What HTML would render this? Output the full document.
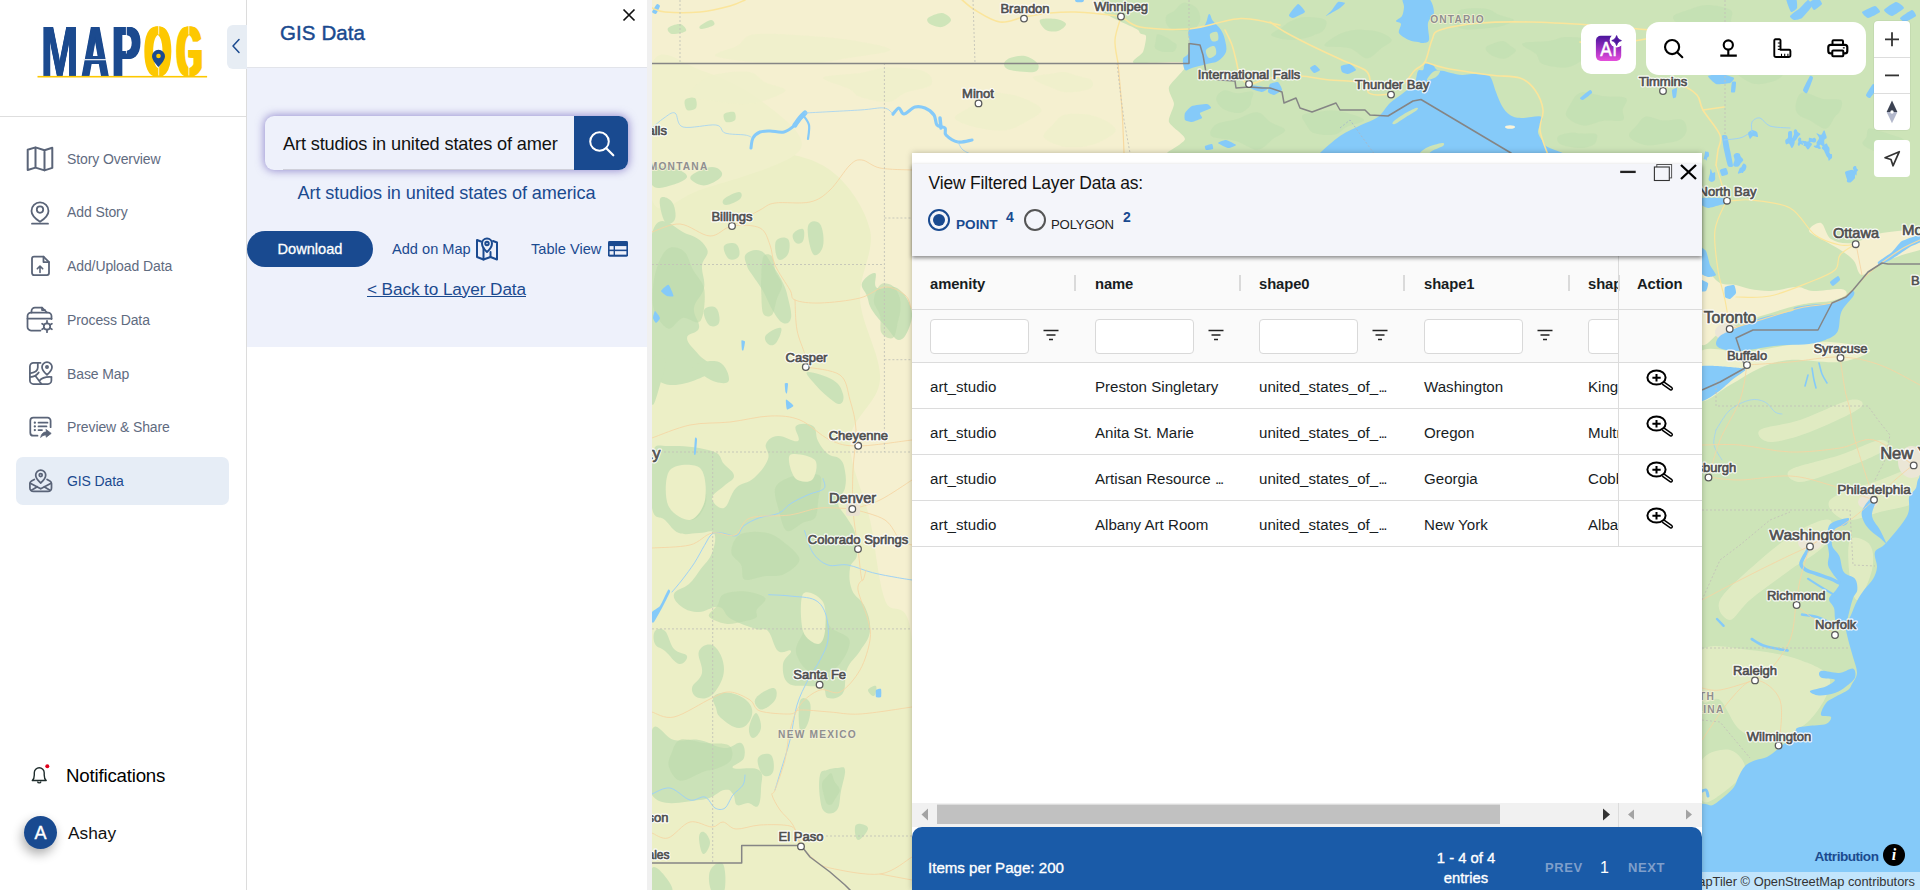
<!DOCTYPE html>
<html lang="en">
<head>
<meta charset="utf-8">
<title>MAPOG - GIS Data</title>
<style>
*{box-sizing:border-box;margin:0;padding:0}
html,body{width:1920px;height:890px;overflow:hidden;background:#fff;font-family:"Liberation Sans",sans-serif;color:#000}
.abs{position:absolute}
#app{position:relative;width:1920px;height:890px;overflow:hidden}

/* ---------- sidebar ---------- */
#side{position:absolute;left:0;top:0;width:247px;height:890px;background:#fff;border-right:1px solid #dcdcdc}
#side .divider{position:absolute;left:0;top:116px;width:246px;height:1px;background:#dedede}
#logo span{position:absolute;top:16.500px;font-size:70.500px;line-height:70.500px;font-weight:bold;transform-origin:0 0;white-space:nowrap}
#collapse{position:absolute;left:227px;top:25px;width:20px;height:44px;background:#e7edf4;border-radius:6px 0 0 6px}
.mi{position:absolute;left:16px;width:213px;height:48px;border-radius:7px}
.mi.active{background:#e6edf6}
.mi svg{position:absolute;left:9px;top:9px;width:30px;height:30px;overflow:visible}
.mi span{position:absolute;left:51px;top:0;line-height:48px;font-size:14px;color:#5f6b7f;white-space:nowrap;letter-spacing:-0.1px}
.mi.active span{color:#1b4a8f}
#notif{position:absolute;left:66px;top:764px;font-size:18.700px;line-height:24px;color:#000;letter-spacing:-0.2px}
#user{position:absolute;left:68px;top:820.500px;font-size:17.300px;line-height:24px;color:#111}
#avatar{position:absolute;left:24px;top:816px;width:33px;height:33px;border-radius:50%;background:#194a90;color:#fff;font-size:18px;line-height:34px;text-align:center;-webkit-text-stroke:.4px #fff;box-shadow:-2px 5px 11px rgba(0,0,0,.32)}

/* ---------- GIS panel ---------- */
#panel{position:absolute;left:247px;top:0;width:400px;height:890px;background:#fff;overflow:hidden}
#panel .head{position:absolute;left:0;top:0;width:402px;height:68px;background:#fff;border-bottom:1px solid #e2e4ea}
#panel .head h1{position:absolute;left:33px;top:19px;font-size:20.5px;line-height:28px;font-weight:500;color:#1b4a8f;letter-spacing:.1px;font-weight:normal;-webkit-text-stroke:.45px #1b4a8f}
#panel .body{position:absolute;left:0;top:68px;width:402px;height:279px;background:#eef1fb}
#search{position:absolute;left:18px;top:48px;width:363px;height:54px;border-radius:9px;background:#eef1fb;box-shadow:0 0 8px 1px rgba(96,80,180,.6);overflow:hidden}
#search .txt{position:absolute;left:18px;top:0;right:54px;height:54px;border-bottom:1px solid #cfd0da;line-height:56px;font-size:18.200px;color:#111;white-space:nowrap;letter-spacing:-.15px}
#search .btn{position:absolute;right:0;top:0;width:54px;height:54px;background:#194a90}
#sub{position:absolute;left:-1.500px;top:112px;width:402px;text-align:center;font-size:18.100px;line-height:26px;color:#1b4a8f;letter-spacing:-.1px}
#dl{position:absolute;left:0;top:163px;width:126px;height:36px;border-radius:18px;background:#194a90;color:#fff;font-size:14.6px;line-height:36px;text-align:center;-webkit-text-stroke:.3px #fff}
.lnk{position:absolute;top:169px;font-size:14.6px;line-height:24px;color:#1b4a8f;white-space:nowrap}
#back{position:absolute;left:-.5px;top:207.500px;width:400px;text-align:center;font-size:17.200px;line-height:26px;color:#1b4a8f;text-decoration:underline;letter-spacing:-.1px}

/* ---------- map ---------- */
#gap{position:absolute;left:647px;top:0;width:5px;height:890px;background:#f0f0f0}
#map{position:absolute;left:652px;top:0;width:1268px;height:890px;background:#f5f0d0;overflow:hidden}
#map svg.base{position:absolute;left:-652px;top:0;width:1920px;height:890px}
.ctl{position:absolute;background:#fff}

/* ---------- table window ---------- */
#win{position:absolute;left:912px;top:153px;width:790px;height:737px;background:#fff;box-shadow:0 0 6px rgba(0,0,0,.25)}
</style>
</head>
<body>
<div id="app">

<!-- MAP -->
<div id="gap"></div>
<div id="map">
<svg class="base" viewBox="0 0 1920 890">
<!--MAPSVG-->
<rect x="652" y="0" width="1268" height="890" fill="#f5f0d0"/>
<path d="M652.0 150.0C670.0 26.7 730.3 146.7 760.0 150.0C789.7 153.3 811.7 156.7 830.0 170.0C848.3 183.3 865.0 208.3 870.0 230.0C875.0 251.7 858.3 275.0 860.0 300.0C861.7 325.0 881.7 356.7 880.0 380.0C878.3 403.3 851.7 416.7 850.0 440.0C848.3 463.3 864.2 493.3 870.0 520.0C875.8 546.7 878.0 580.0 885.0 600.0C892.0 620.0 907.5 591.7 912.0 640.0C916.5 688.3 955.3 848.3 912.0 890.0C868.7 931.7 695.3 1013.3 652.0 890.0C608.7 766.7 634.0 273.3 652.0 150.0Z" fill="#ecefc6"/>
<path d="M652.0 64.0C660.0 42.3 682.0 64.0 700.0 70.0C718.0 76.0 743.3 86.7 760.0 100.0C776.7 113.3 810.0 135.0 800.0 150.0C790.0 165.0 724.7 181.7 700.0 190.0C675.3 198.3 660.0 221.0 652.0 200.0C644.0 179.0 644.0 85.7 652.0 64.0Z" fill="#f0f0cb"/>
<path d="M1138.0 -5.0C1046.3 -0.8 1138.1 26.2 1139.0 31.0C1139.9 35.8 1145.5 33.5 1146.0 36.0C1146.5 38.5 1144.4 48.9 1143.0 52.0C1141.6 55.1 1129.0 61.7 1134.0 63.0C1139.0 64.3 1181.9 60.2 1186.0 63.0C1190.1 65.8 1170.4 82.2 1169.0 87.0C1167.6 91.8 1174.0 99.9 1174.0 104.0C1174.0 108.1 1167.7 117.9 1169.0 122.0C1170.3 126.1 1185.2 135.4 1185.0 139.0C1184.8 142.6 1169.1 150.6 1167.0 153.0C1164.9 155.4 1078.6 159.2 1167.0 160.0C1255.4 160.8 1836.6 179.2 1925.0 160.0C2013.4 140.8 2016.8 14.2 1925.0 -5.0C1833.2 -24.2 1229.7 -9.2 1138.0 -5.0Z" fill="#cde4b8"/>
<rect x="1700" y="150" width="220" height="740" fill="#cde4b8"/>
<path d="M1285.1 130.0C1285.5 132.8 1277.7 135.5 1273.2 138.7C1268.6 142.0 1263.9 149.2 1257.7 149.6C1251.5 150.0 1243.7 143.1 1236.0 140.9C1228.3 138.7 1214.8 139.1 1211.5 136.3C1208.1 133.6 1211.8 127.3 1215.9 124.4C1220.1 121.6 1229.3 121.3 1236.2 119.2C1243.0 117.2 1251.2 111.7 1257.0 112.2C1262.7 112.7 1266.0 119.2 1270.7 122.2C1275.4 125.1 1284.7 127.2 1285.1 130.0Z" fill="#bfdeb0" opacity=".55"/>
<path d="M1323.8 30.0C1321.9 32.6 1316.8 34.0 1313.4 35.4C1309.9 36.8 1307.3 37.7 1303.1 38.4C1298.9 39.2 1293.5 40.4 1288.2 39.8C1282.8 39.3 1272.0 37.2 1271.1 35.0C1270.2 32.9 1279.6 29.2 1282.7 27.0C1285.8 24.7 1286.2 23.3 1289.9 21.6C1293.6 20.0 1298.9 17.4 1304.7 17.1C1310.6 16.8 1322.0 17.7 1325.2 19.9C1328.3 22.0 1325.8 27.4 1323.8 30.0Z" fill="#bfdeb0" opacity=".55"/>
<path d="M1391.6 40.0C1391.9 42.7 1385.4 45.3 1381.3 48.3C1377.2 51.4 1372.2 58.4 1366.9 58.4C1361.7 58.4 1356.8 50.3 1349.8 48.3C1342.7 46.2 1327.0 48.0 1324.7 46.0C1322.4 43.9 1332.0 38.4 1336.0 35.9C1340.0 33.4 1344.1 31.9 1348.7 30.9C1353.4 29.9 1358.6 29.7 1363.8 29.9C1369.0 30.1 1375.3 30.5 1379.9 32.2C1384.5 33.9 1391.4 37.3 1391.6 40.0Z" fill="#bfdeb0" opacity=".55"/>
<path d="M1364.2 120.0C1364.1 122.4 1351.5 124.6 1346.7 127.0C1341.8 129.4 1340.5 133.5 1335.1 134.6C1329.8 135.6 1319.5 135.0 1314.6 133.3C1309.8 131.6 1308.0 127.4 1306.0 124.4C1304.1 121.3 1300.4 117.2 1302.8 115.1C1305.2 112.9 1315.2 112.4 1320.3 111.6C1325.4 110.8 1328.9 110.3 1333.4 110.5C1337.8 110.7 1341.9 111.3 1347.0 112.9C1352.2 114.4 1364.3 117.6 1364.2 120.0Z" fill="#bfdeb0" opacity=".55"/>
<path d="M1513.8 20.0C1514.3 21.9 1506.7 24.7 1501.8 26.1C1496.9 27.5 1490.8 28.1 1484.5 28.6C1478.2 29.1 1469.4 30.1 1464.1 29.2C1458.8 28.3 1454.1 25.3 1452.7 23.3C1451.3 21.3 1454.2 19.4 1455.8 17.1C1457.3 14.8 1456.9 10.9 1461.9 9.6C1466.9 8.2 1479.8 7.9 1485.9 8.8C1492.1 9.6 1494.2 12.9 1498.9 14.7C1503.5 16.6 1513.3 18.1 1513.8 20.0Z" fill="#bfdeb0" opacity=".55"/>
<path d="M1591.6 50.0C1590.9 53.3 1587.6 56.3 1583.4 59.2C1579.2 62.1 1573.4 66.6 1566.6 67.4C1559.8 68.2 1547.7 66.3 1542.6 64.1C1537.5 61.8 1539.4 57.5 1536.0 54.1C1532.6 50.7 1520.2 45.8 1522.3 43.6C1524.5 41.4 1541.9 42.2 1549.0 41.1C1556.1 40.0 1558.6 37.3 1564.9 37.0C1571.3 36.7 1582.7 37.2 1587.1 39.4C1591.6 41.5 1592.2 46.7 1591.6 50.0Z" fill="#bfdeb0" opacity=".55"/>
<path d="M1622.7 110.0C1622.1 113.6 1626.0 118.4 1622.8 120.2C1619.6 122.0 1610.1 119.8 1603.5 120.7C1596.9 121.6 1589.4 126.2 1583.2 125.5C1577.1 124.8 1568.7 120.0 1566.6 116.5C1564.4 112.9 1568.0 108.2 1570.4 104.2C1572.8 100.3 1575.4 93.8 1581.1 92.5C1586.8 91.2 1597.0 95.3 1604.5 96.3C1612.0 97.3 1623.1 96.0 1626.1 98.3C1629.1 100.6 1623.2 106.4 1622.7 110.0Z" fill="#bfdeb0" opacity=".55"/>
<path d="M1686.7 130.0C1686.4 133.3 1684.0 137.3 1680.2 139.5C1676.5 141.7 1670.2 142.4 1664.2 143.4C1658.3 144.3 1650.4 146.2 1644.5 145.0C1638.7 143.8 1630.5 139.6 1629.2 136.3C1627.9 133.0 1634.1 128.6 1636.9 125.3C1639.7 122.0 1641.7 117.3 1646.1 116.5C1650.4 115.7 1657.0 119.9 1663.0 120.5C1669.0 121.0 1677.9 118.1 1681.9 119.7C1685.8 121.3 1686.9 126.7 1686.7 130.0Z" fill="#bfdeb0" opacity=".55"/>
<path d="M1783.1 60.0C1785.3 64.5 1785.4 73.3 1780.9 77.3C1776.5 81.3 1763.7 84.6 1756.4 84.1C1749.1 83.7 1742.6 77.7 1737.3 74.7C1731.9 71.7 1727.2 70.0 1724.1 66.3C1720.9 62.6 1715.8 55.3 1718.5 52.4C1721.1 49.4 1733.9 50.4 1740.0 48.5C1746.1 46.5 1750.5 40.6 1755.1 40.8C1759.7 41.1 1763.0 46.9 1767.6 50.1C1772.3 53.3 1780.9 55.5 1783.1 60.0Z" fill="#bfdeb0" opacity=".55"/>
<path d="M1840.5 110.0C1839.5 112.8 1837.3 114.0 1834.8 117.1C1832.4 120.2 1830.0 128.2 1825.8 128.7C1821.6 129.2 1814.2 122.6 1809.6 120.3C1805.1 117.9 1800.7 117.1 1798.3 114.5C1796.0 112.0 1795.0 108.6 1795.7 104.9C1796.4 101.3 1797.7 93.6 1802.4 92.5C1807.0 91.5 1817.0 97.6 1823.4 98.9C1829.8 100.1 1837.8 98.2 1840.7 100.1C1843.5 101.9 1841.5 107.2 1840.5 110.0Z" fill="#bfdeb0" opacity=".55"/>
<path d="M1731.0 20.0C1730.8 23.3 1733.3 27.4 1729.1 29.8C1725.0 32.2 1714.4 33.9 1706.4 34.5C1698.4 35.0 1686.2 34.9 1681.2 33.0C1676.1 31.2 1677.5 26.3 1676.2 23.5C1674.9 20.7 1671.8 18.3 1673.5 16.1C1675.2 14.0 1681.0 12.5 1686.5 10.6C1692.0 8.8 1699.3 5.1 1706.6 5.0C1713.9 4.9 1726.3 7.3 1730.3 9.8C1734.4 12.3 1731.2 16.7 1731.0 20.0Z" fill="#bfdeb0" opacity=".55"/>
<path d="M1596.6 140.0C1596.1 141.8 1595.3 143.6 1593.0 145.0C1590.8 146.3 1586.8 147.7 1583.1 148.0C1579.4 148.3 1575.0 147.8 1571.1 147.0C1567.1 146.3 1561.7 145.2 1559.5 143.4C1557.4 141.6 1556.2 138.1 1558.0 136.4C1559.9 134.6 1566.8 133.2 1570.8 132.8C1574.9 132.3 1578.3 133.4 1582.5 133.6C1586.7 133.8 1593.5 132.9 1595.9 133.9C1598.3 135.0 1597.1 138.2 1596.6 140.0Z" fill="#bfdeb0" opacity=".55"/>
<path d="M1251.4 100.0C1250.8 102.5 1251.5 104.6 1249.4 106.7C1247.4 108.9 1243.2 112.5 1239.1 113.0C1235.0 113.5 1228.3 111.4 1224.8 109.8C1221.3 108.2 1219.3 105.7 1217.9 103.5C1216.6 101.2 1215.5 98.5 1216.7 96.3C1217.9 94.1 1221.5 90.8 1224.9 90.3C1228.3 89.8 1232.5 93.0 1237.1 93.2C1241.8 93.5 1250.3 90.6 1252.6 91.8C1255.0 92.9 1251.9 97.5 1251.4 100.0Z" fill="#bfdeb0" opacity=".55"/>
<path d="M1903.9 140.0C1905.4 142.5 1902.6 147.4 1899.3 149.7C1896.1 152.1 1889.0 154.3 1884.2 154.3C1879.4 154.3 1874.4 151.4 1870.8 149.6C1867.1 147.9 1863.3 145.9 1862.5 143.8C1861.8 141.7 1865.3 139.6 1866.4 137.0C1867.5 134.5 1866.4 129.5 1869.1 128.6C1871.7 127.8 1878.8 130.8 1882.4 131.8C1886.0 132.8 1887.1 133.3 1890.7 134.6C1894.3 136.0 1902.5 137.5 1903.9 140.0Z" fill="#bfdeb0" opacity=".55"/>
<path d="M1515.9 50.0C1516.2 51.5 1513.8 53.5 1511.7 54.9C1509.6 56.4 1506.2 58.6 1503.1 58.7C1500.0 58.9 1495.7 57.0 1493.1 55.9C1490.6 54.9 1489.0 53.6 1487.8 52.2C1486.6 50.8 1485.0 48.8 1485.8 47.4C1486.6 46.0 1489.9 44.8 1492.8 43.8C1495.7 42.7 1500.2 40.8 1503.1 41.1C1506.0 41.4 1508.1 44.2 1510.2 45.7C1512.4 47.2 1515.7 48.5 1515.9 50.0Z" fill="#bfdeb0" opacity=".55"/>
<path d="M1200.2 20.0C1199.7 23.6 1196.3 28.0 1193.2 29.7C1190.2 31.5 1185.4 30.3 1182.1 30.4C1178.8 30.4 1176.0 31.0 1173.4 30.0C1170.8 29.0 1167.7 26.7 1166.6 24.3C1165.4 21.9 1165.1 17.9 1166.4 15.7C1167.7 13.5 1171.3 13.2 1174.1 11.1C1177.0 8.9 1179.7 3.4 1183.5 2.8C1187.2 2.3 1193.7 5.0 1196.5 7.9C1199.3 10.8 1200.7 16.4 1200.2 20.0Z" fill="#bfdeb0" opacity=".55"/>
<path d="M1176.7 45.0C1177.2 46.8 1175.8 50.2 1174.1 51.4C1172.4 52.5 1168.7 52.0 1166.5 52.0C1164.2 52.0 1162.6 51.9 1160.7 51.2C1158.8 50.6 1155.8 49.6 1155.0 48.0C1154.1 46.5 1155.1 44.4 1155.6 42.1C1156.0 39.9 1155.8 35.1 1157.6 34.3C1159.5 33.6 1164.3 36.4 1166.6 37.5C1168.8 38.5 1169.4 39.5 1171.1 40.7C1172.8 42.0 1176.2 43.2 1176.7 45.0Z" fill="#bfdeb0" opacity=".55"/>
<path d="M1809.0 231.0C1808.3 228.0 1817.3 221.7 1821.0 223.0C1824.7 224.3 1825.8 235.7 1831.0 239.0C1836.2 242.3 1843.5 244.0 1852.0 243.0C1860.5 242.0 1869.8 235.0 1882.0 233.0C1894.2 231.0 1917.8 228.7 1925.0 231.0C1932.2 233.3 1928.8 243.0 1925.0 247.0C1921.2 251.0 1909.2 252.3 1902.0 255.0C1894.8 257.7 1888.7 259.7 1882.0 263.0C1875.3 266.3 1866.7 275.3 1862.0 275.0C1857.3 274.7 1857.3 265.0 1854.0 261.0C1850.7 257.0 1846.8 254.3 1842.0 251.0C1837.2 247.7 1830.5 244.3 1825.0 241.0C1819.5 237.7 1809.7 234.0 1809.0 231.0Z" fill="#f5f0d0"/>
<path d="M1700.0 271.0C1703.3 261.2 1714.0 280.7 1720.0 283.0C1726.0 285.3 1731.0 284.0 1736.0 285.0C1741.0 286.0 1744.2 288.0 1750.0 289.0C1755.8 290.0 1763.2 291.3 1771.0 291.0C1778.8 290.7 1790.0 287.0 1797.0 287.0C1804.0 287.0 1805.7 290.7 1813.0 291.0C1820.3 291.3 1835.5 288.3 1841.0 289.0C1846.5 289.7 1847.7 293.0 1846.0 295.0C1844.3 297.0 1836.8 299.7 1831.0 301.0C1825.2 302.3 1817.7 302.0 1811.0 303.0C1804.3 304.0 1799.3 304.8 1791.0 307.0C1782.7 309.2 1771.2 312.8 1761.0 316.0C1750.8 319.2 1736.8 323.3 1730.0 326.0C1723.2 328.7 1725.0 329.3 1720.0 332.0C1715.0 334.7 1703.3 352.2 1700.0 342.0C1696.7 331.8 1696.7 280.8 1700.0 271.0Z" fill="#f5f0d0"/>
<path d="M1700.0 352.0C1707.5 344.0 1730.0 353.2 1745.0 352.0C1760.0 350.8 1775.8 346.7 1790.0 345.0C1804.2 343.3 1816.7 341.2 1830.0 342.0C1843.3 342.8 1868.3 346.7 1870.0 350.0C1871.7 353.3 1853.3 360.3 1840.0 362.0C1826.7 363.7 1803.3 359.0 1790.0 360.0C1776.7 361.0 1770.0 363.8 1760.0 368.0C1750.0 372.2 1740.0 379.7 1730.0 385.0C1720.0 390.3 1705.0 405.5 1700.0 400.0C1695.0 394.5 1692.5 360.0 1700.0 352.0Z" fill="#eef0cc"/>
<path d="M1760.0 430.0C1765.0 426.3 1785.0 425.0 1800.0 420.0C1815.0 415.0 1840.0 402.0 1850.0 400.0C1860.0 398.0 1866.7 402.7 1860.0 408.0C1853.3 413.3 1825.0 426.3 1810.0 432.0C1795.0 437.7 1778.3 442.3 1770.0 442.0C1761.7 441.7 1755.0 433.7 1760.0 430.0Z" fill="#e6edc6" opacity=".75"/>
<path d="M1790.0 470.0C1796.7 465.5 1825.0 460.0 1840.0 455.0C1855.0 450.0 1872.5 440.8 1880.0 440.0C1887.5 439.2 1891.7 445.0 1885.0 450.0C1878.3 455.0 1854.2 464.7 1840.0 470.0C1825.8 475.3 1808.3 482.0 1800.0 482.0C1791.7 482.0 1783.3 474.5 1790.0 470.0Z" fill="#e6edc6" opacity=".75"/>
<path d="M1830.0 500.0C1835.8 493.3 1865.8 485.0 1880.0 480.0C1894.2 475.0 1908.7 466.7 1915.0 470.0C1921.3 473.3 1923.8 493.0 1918.0 500.0C1912.2 507.0 1892.2 508.7 1880.0 512.0C1867.8 515.3 1853.3 522.0 1845.0 520.0C1836.7 518.0 1824.2 506.7 1830.0 500.0Z" fill="#e6edc6" opacity=".75"/>
<path d="M1720.0 600.0C1725.0 590.0 1746.7 571.7 1760.0 560.0C1773.3 548.3 1788.3 536.7 1800.0 530.0C1811.7 523.3 1825.8 517.5 1830.0 520.0C1834.2 522.5 1831.7 536.7 1825.0 545.0C1818.3 553.3 1802.5 560.8 1790.0 570.0C1777.5 579.2 1760.0 591.7 1750.0 600.0C1740.0 608.3 1735.0 620.0 1730.0 620.0C1725.0 620.0 1715.0 610.0 1720.0 600.0Z" fill="#e6edc6" opacity=".75"/>
<path d="M1702.0 650.0C1710.0 641.7 1733.7 648.3 1750.0 650.0C1766.3 651.7 1786.7 655.0 1800.0 660.0C1813.3 665.0 1828.3 670.0 1830.0 680.0C1831.7 690.0 1820.0 710.0 1810.0 720.0C1800.0 730.0 1781.7 738.3 1770.0 740.0C1758.3 741.7 1748.3 736.7 1740.0 730.0C1731.7 723.3 1726.3 705.0 1720.0 700.0C1713.7 695.0 1705.0 708.3 1702.0 700.0C1699.0 691.7 1694.0 658.3 1702.0 650.0Z" fill="#e6edc6" opacity=".75"/>
<path d="M1850.0 540.0C1853.3 534.2 1866.3 540.0 1870.0 545.0C1873.7 550.0 1874.0 560.8 1872.0 570.0C1870.0 579.2 1861.7 598.3 1858.0 600.0C1854.3 601.7 1851.3 590.0 1850.0 580.0C1848.7 570.0 1846.7 545.8 1850.0 540.0Z" fill="#e6edc6" opacity=".75"/>
<path d="M1702.0 760.0C1706.7 751.7 1722.8 748.3 1730.0 750.0C1737.2 751.7 1746.7 762.5 1745.0 770.0C1743.3 777.5 1727.2 790.0 1720.0 795.0C1712.8 800.0 1705.0 805.8 1702.0 800.0C1699.0 794.2 1697.3 768.3 1702.0 760.0Z" fill="#e6edc6" opacity=".75"/>
<ellipse cx="1912" cy="462" rx="14" ry="16" fill="#ebe6d6"/>
<ellipse cx="1868" cy="502" rx="10" ry="7" fill="#ebe6d6"/>
<ellipse cx="1810" cy="542" rx="12" ry="9" fill="#ebe6d6"/>
<ellipse cx="1727" cy="332" rx="12" ry="9" fill="#ebe6d6"/>
<path d="M652.0 234.0C659.0 206.4 676.0 231.0 687.0 234.0C698.0 237.0 704.0 242.6 707.0 249.0C710.0 255.4 702.6 258.2 702.0 266.0C701.4 273.8 705.6 279.6 704.0 288.0C702.4 296.4 695.0 300.0 694.0 308.0C693.0 316.0 700.4 322.0 699.0 328.0C697.6 334.0 687.0 332.6 687.0 338.0C687.0 343.4 693.6 348.2 699.0 355.0C704.4 361.8 723.4 368.6 714.0 372.0C704.6 375.4 664.4 399.6 652.0 372.0C639.6 344.4 645.0 261.6 652.0 234.0Z" fill="#cbe2b8"/>
<path d="M652.0 170.0C655.6 166.4 663.0 165.6 670.0 167.0C677.0 168.4 688.0 173.0 687.0 177.0C686.0 181.0 672.0 185.4 665.0 187.0C658.0 188.6 654.6 188.4 652.0 185.0C649.4 181.6 648.4 173.6 652.0 170.0Z" fill="#cbe2b8"/>
<path d="M692.0 175.0C695.6 172.0 706.0 167.0 712.0 167.0C718.0 167.0 723.0 171.4 722.0 175.0C721.0 178.6 712.6 183.6 707.0 185.0C701.4 186.4 697.0 184.0 694.0 182.0C691.0 180.0 688.4 178.0 692.0 175.0Z" fill="#cbe2b8"/>
<path d="M660.0 199.0C661.4 195.0 669.0 198.0 672.0 202.0C675.0 206.0 676.4 215.0 675.0 219.0C673.6 223.0 668.0 226.0 665.0 222.0C662.0 218.0 658.6 203.0 660.0 199.0Z" fill="#cbe2b8"/>
<path d="M746.0 254.0C748.8 251.0 755.6 248.6 761.0 251.0C766.4 253.4 768.6 259.6 773.0 266.0C777.4 272.4 780.0 276.6 783.0 283.0C786.0 289.4 786.4 291.0 788.0 298.0C789.6 305.0 792.0 313.0 791.0 318.0C790.0 323.0 786.6 324.4 783.0 323.0C779.4 321.6 777.0 317.4 773.0 311.0C769.0 304.6 767.0 298.0 763.0 291.0C759.0 284.0 756.2 281.0 753.0 276.0C749.8 271.0 748.4 270.4 747.0 266.0C745.6 261.6 743.2 257.0 746.0 254.0Z" fill="#cbe2b8"/>
<path d="M724.0 246.0C725.4 243.0 733.0 242.0 736.0 244.0C739.0 246.0 740.4 253.0 739.0 256.0C737.6 259.0 732.0 261.0 729.0 259.0C726.0 257.0 722.6 249.0 724.0 246.0Z" fill="#cbe2b8"/>
<path d="M776.0 241.0C778.0 237.0 785.6 236.4 788.0 239.0C790.4 241.6 790.0 250.0 788.0 254.0C786.0 258.0 780.4 261.6 778.0 259.0C775.6 256.4 774.0 245.0 776.0 241.0Z" fill="#cbe2b8"/>
<path d="M793.0 234.0C794.4 231.2 801.0 227.6 803.0 229.0C805.0 230.4 804.4 238.2 803.0 241.0C801.6 243.8 798.0 244.4 796.0 243.0C794.0 241.6 791.6 236.8 793.0 234.0Z" fill="#cbe2b8"/>
<path d="M808.0 226.0C809.4 220.0 817.0 220.0 820.0 224.0C823.0 228.0 824.4 240.0 823.0 246.0C821.6 252.0 816.0 258.0 813.0 254.0C810.0 250.0 806.6 232.0 808.0 226.0Z" fill="#cbe2b8"/>
<path d="M724.0 199.0C726.6 196.4 735.8 192.0 739.0 192.0C742.2 192.0 742.6 196.4 740.0 199.0C737.4 201.6 729.2 205.0 726.0 205.0C722.8 205.0 721.4 201.6 724.0 199.0Z" fill="#cbe2b8"/>
<path d="M862.0 283.0C863.6 278.4 872.0 272.0 875.0 273.0C878.0 274.0 872.6 285.0 877.0 288.0C881.4 291.0 890.2 284.0 897.0 288.0C903.8 292.0 908.6 300.0 911.0 308.0C913.4 316.0 911.4 321.6 909.0 328.0C906.6 334.4 903.4 340.0 899.0 340.0C894.6 340.0 892.4 334.0 887.0 328.0C881.6 322.0 876.0 316.4 872.0 310.0C868.0 303.6 869.0 301.4 867.0 296.0C865.0 290.6 860.4 287.6 862.0 283.0Z" fill="#cbe2b8"/>
<path d="M704.0 310.0C705.4 306.6 713.0 305.4 716.0 308.0C719.0 310.6 720.4 319.6 719.0 323.0C717.6 326.4 712.0 327.6 709.0 325.0C706.0 322.4 702.6 313.4 704.0 310.0Z" fill="#cbe2b8"/>
<path d="M766.0 335.0C768.6 331.8 779.0 326.4 781.0 328.0C783.0 329.6 778.6 339.8 776.0 343.0C773.4 346.2 770.0 345.6 768.0 344.0C766.0 342.4 763.4 338.2 766.0 335.0Z" fill="#cbe2b8"/>
<path d="M652.0 360.0C654.6 351.2 663.4 355.0 665.0 360.0C666.6 365.0 662.6 376.2 660.0 385.0C657.4 393.8 653.6 409.0 652.0 404.0C650.4 399.0 649.4 368.8 652.0 360.0Z" fill="#cbe2b8"/>
<path d="M694.0 365.0C698.0 363.0 712.0 359.0 719.0 362.0C726.0 365.0 729.6 376.0 729.0 380.0C728.4 384.0 722.0 383.6 716.0 382.0C710.0 380.4 703.4 375.4 699.0 372.0C694.6 368.6 690.0 367.0 694.0 365.0Z" fill="#cbe2b8"/>
<path d="M808.0 372.0C812.0 371.6 826.0 375.6 833.0 380.0C840.0 384.4 841.6 389.2 843.0 394.0C844.4 398.8 843.0 403.4 840.0 404.0C837.0 404.6 833.4 401.4 828.0 397.0C822.6 392.6 817.0 387.0 813.0 382.0C809.0 377.0 804.0 372.4 808.0 372.0Z" fill="#cbe2b8"/>
<path d="M652.0 454.0C655.6 441.6 658.0 446.6 670.0 446.0C682.0 445.4 701.2 447.4 712.0 451.0C722.8 454.6 719.6 459.0 724.0 464.0C728.4 469.0 734.0 471.6 734.0 476.0C734.0 480.4 728.4 481.6 724.0 486.0C719.6 490.4 712.0 493.6 712.0 498.0C712.0 502.4 719.2 510.0 724.0 508.0C728.8 506.0 730.0 494.0 736.0 488.0C742.0 482.0 747.6 483.8 754.0 478.0C760.4 472.2 765.6 465.8 768.0 459.0C770.4 452.2 764.0 448.6 766.0 444.0C768.0 439.4 771.6 436.6 778.0 436.0C784.4 435.4 794.4 443.0 798.0 441.0C801.6 439.0 793.0 429.0 796.0 426.0C799.0 423.0 808.6 423.0 813.0 426.0C817.4 429.0 815.0 435.4 818.0 441.0C821.0 446.6 823.6 450.4 828.0 454.0C832.4 457.6 836.6 455.6 840.0 459.0C843.4 462.4 844.0 465.2 845.0 471.0C846.0 476.8 846.4 481.6 845.0 488.0C843.6 494.4 837.6 497.0 838.0 503.0C838.4 509.0 843.6 512.0 847.0 518.0C850.4 524.0 853.0 525.6 855.0 533.0C857.0 540.4 858.0 548.0 857.0 555.0C856.0 562.0 851.0 561.0 850.0 568.0C849.0 575.0 849.0 582.2 852.0 590.0C855.0 597.8 861.4 598.8 865.0 607.0C868.6 615.2 871.0 622.2 870.0 631.0C869.0 639.8 864.6 643.4 860.0 651.0C855.4 658.6 850.4 660.6 847.0 669.0C843.6 677.4 846.8 687.2 843.0 693.0C839.2 698.8 832.0 699.0 828.0 698.0C824.0 697.0 827.0 690.4 823.0 688.0C819.0 685.6 815.0 687.0 808.0 686.0C801.0 685.0 793.0 687.4 788.0 683.0C783.0 678.6 782.4 670.4 783.0 664.0C783.6 657.6 792.0 653.6 791.0 651.0C790.0 648.4 782.6 655.0 778.0 651.0C773.4 647.0 772.4 635.4 768.0 631.0C763.6 626.6 763.4 631.4 756.0 629.0C748.6 626.6 738.4 623.4 731.0 619.0C723.6 614.6 725.4 608.4 719.0 607.0C712.6 605.6 706.4 612.0 699.0 612.0C691.6 612.0 687.0 610.6 682.0 607.0C677.0 603.4 672.6 598.6 674.0 594.0C675.4 589.4 683.8 588.8 689.0 584.0C694.2 579.2 695.4 576.2 700.0 570.0C704.6 563.8 709.2 560.4 712.0 553.0C714.8 545.6 716.6 537.0 714.0 533.0C711.4 529.0 706.0 533.0 699.0 533.0C692.0 533.0 685.8 535.6 679.0 533.0C672.2 530.4 670.4 525.0 665.0 520.0C659.6 515.0 654.6 521.2 652.0 508.0C649.4 494.8 648.4 466.4 652.0 454.0Z" fill="#cbe2b8"/>
<path d="M699.0 651.0C701.4 645.6 709.0 642.4 714.0 646.0C719.0 649.6 724.0 659.6 724.0 669.0C724.0 678.4 719.0 687.2 714.0 693.0C709.0 698.8 703.4 699.0 699.0 698.0C694.6 697.0 691.4 693.0 692.0 688.0C692.6 683.0 700.6 680.4 702.0 673.0C703.4 665.6 696.6 656.4 699.0 651.0Z" fill="#cbe2b8"/>
<path d="M655.0 631.0C657.0 628.4 661.2 627.4 665.0 631.0C668.8 634.6 669.6 644.0 674.0 649.0C678.4 654.0 686.0 653.0 687.0 656.0C688.0 659.0 683.4 665.0 679.0 664.0C674.6 663.0 669.8 655.0 665.0 651.0C660.2 647.0 657.0 648.0 655.0 644.0C653.0 640.0 653.0 633.6 655.0 631.0Z" fill="#cbe2b8"/>
<path d="M714.0 696.0C717.0 693.0 724.0 691.6 731.0 693.0C738.0 694.4 745.0 698.0 749.0 703.0C753.0 708.0 753.0 713.0 751.0 718.0C749.0 723.0 745.0 728.0 739.0 728.0C733.0 728.0 725.6 722.0 721.0 718.0C716.4 714.0 717.4 712.4 716.0 708.0C714.6 703.6 711.0 699.0 714.0 696.0Z" fill="#cbe2b8"/>
<path d="M756.0 698.0C759.0 694.0 769.0 688.0 773.0 688.0C777.0 688.0 777.4 694.0 776.0 698.0C774.6 702.0 769.6 706.0 766.0 708.0C762.4 710.0 760.0 710.0 758.0 708.0C756.0 706.0 753.0 702.0 756.0 698.0Z" fill="#cbe2b8"/>
<path d="M800.0 701.0C802.0 695.6 808.4 698.6 810.0 703.0C811.6 707.4 810.0 717.6 808.0 723.0C806.0 728.4 801.6 734.4 800.0 730.0C798.4 725.6 798.0 706.4 800.0 701.0Z" fill="#cbe2b8"/>
<path d="M749.0 728.0C749.6 723.0 753.6 713.0 756.0 713.0C758.4 713.0 761.6 723.0 761.0 728.0C760.4 733.0 755.4 738.0 753.0 738.0C750.6 738.0 748.4 733.0 749.0 728.0Z" fill="#cbe2b8"/>
<path d="M652.0 730.0C656.4 719.0 664.6 738.0 674.0 740.0C683.4 742.0 689.0 738.4 699.0 740.0C709.0 741.6 715.6 747.4 724.0 748.0C732.4 748.6 737.0 741.0 741.0 743.0C745.0 745.0 745.6 753.0 744.0 758.0C742.4 763.0 730.0 765.6 733.0 768.0C736.0 770.4 753.4 766.0 759.0 770.0C764.6 774.0 761.2 780.8 761.0 788.0C760.8 795.2 760.6 803.0 758.0 806.0C755.4 809.0 752.2 803.2 748.0 803.0C743.8 802.8 740.0 806.8 737.0 805.0C734.0 803.2 735.6 797.0 733.0 794.0C730.4 791.0 730.6 788.8 724.0 790.0C717.4 791.2 714.4 799.0 700.0 800.0C685.6 801.0 661.6 809.0 652.0 795.0C642.4 781.0 647.6 741.0 652.0 730.0Z" fill="#cbe2b8"/>
<path d="M758.0 758.0C759.6 754.0 768.0 752.2 771.0 755.0C774.0 757.8 774.6 768.0 773.0 772.0C771.4 776.0 766.0 777.8 763.0 775.0C760.0 772.2 756.4 762.0 758.0 758.0Z" fill="#cbe2b8"/>
<path d="M820.0 775.0C821.4 769.4 823.4 771.4 827.0 770.0C830.6 768.6 834.4 768.0 838.0 768.0C841.6 768.0 844.4 765.4 845.0 770.0C845.6 774.6 842.6 783.0 841.0 791.0C839.4 799.0 840.2 805.8 837.0 810.0C833.8 814.2 828.4 814.4 825.0 812.0C821.6 809.6 821.0 805.4 820.0 798.0C819.0 790.6 818.6 780.6 820.0 775.0Z" fill="#cbe2b8"/>
<path d="M699.0 837.0C699.2 832.6 701.8 830.8 704.0 832.0C706.2 833.2 710.2 838.6 710.0 843.0C709.8 847.4 705.2 855.2 703.0 854.0C700.8 852.8 698.8 841.4 699.0 837.0Z" fill="#cbe2b8"/>
<path d="M855.0 827.0C855.6 823.8 858.4 823.6 861.0 824.0C863.6 824.4 868.6 825.8 868.0 829.0C867.4 832.2 860.6 840.4 858.0 840.0C855.4 839.6 854.4 830.2 855.0 827.0Z" fill="#cbe2b8"/>
<path d="M710.0 871.0C712.2 865.4 720.2 859.8 723.0 864.0C725.8 868.2 726.2 886.4 724.0 892.0C721.8 897.6 714.8 896.2 712.0 892.0C709.2 887.8 707.8 876.6 710.0 871.0Z" fill="#cbe2b8"/>
<path d="M652.0 868.0C654.4 864.6 660.0 870.2 664.0 875.0C668.0 879.8 674.4 888.6 672.0 892.0C669.6 895.4 656.0 896.8 652.0 892.0C648.0 887.2 649.6 871.4 652.0 868.0Z" fill="#cbe2b8"/>
<path d="M868.0 690.0C868.4 688.0 874.8 684.8 876.0 686.0C877.2 687.2 875.6 695.2 874.0 696.0C872.4 696.8 867.6 692.0 868.0 690.0Z" fill="#cbe2b8"/>
<path d="M799.5 560.0C799.0 565.1 789.4 571.7 783.4 574.4C777.5 577.1 770.4 575.4 763.9 576.3C757.4 577.2 748.3 581.5 744.5 579.6C740.8 577.7 743.4 569.6 741.1 565.0C738.9 560.5 731.4 557.4 731.3 552.3C731.1 547.2 734.1 537.8 740.0 534.6C745.9 531.3 758.8 531.3 766.5 532.8C774.2 534.4 780.6 539.4 786.1 543.9C791.6 548.4 799.9 554.9 799.5 560.0Z" fill="#bddbac" opacity=".6"/>
<path d="M818.3 500.0C817.4 506.8 817.8 513.7 815.3 517.5C812.7 521.3 807.7 520.4 802.9 522.7C798.2 524.9 790.9 533.0 786.9 530.9C782.9 528.9 780.8 517.7 778.9 510.5C776.9 503.3 773.4 493.3 775.3 487.7C777.2 482.2 785.7 479.0 790.3 477.1C794.9 475.2 798.0 476.3 803.1 476.2C808.1 476.1 818.0 472.5 820.5 476.5C823.1 480.5 819.2 493.2 818.3 500.0Z" fill="#bddbac" opacity=".6"/>
<path d="M849.5 640.0C851.1 645.8 845.2 656.9 841.0 662.4C836.9 668.0 830.4 672.3 824.6 673.5C818.9 674.7 811.3 673.4 806.5 669.7C801.8 665.9 796.4 657.4 795.9 651.2C795.3 645.0 801.1 638.2 803.3 632.3C805.4 626.3 805.5 618.3 808.9 615.5C812.2 612.6 819.7 613.1 823.4 615.2C827.2 617.3 827.0 623.8 831.3 627.9C835.6 632.1 847.8 634.2 849.5 640.0Z" fill="#bddbac" opacity=".6"/>
<path d="M756.7 610.0C755.2 613.2 758.4 615.7 756.2 617.6C754.0 619.5 748.7 620.4 743.6 621.5C738.5 622.5 731.6 624.6 725.8 623.8C720.0 622.9 710.4 619.4 709.0 616.3C707.6 613.3 714.9 609.1 717.4 605.4C719.8 601.7 718.9 596.5 723.7 594.2C728.4 591.9 738.9 590.8 745.8 591.5C752.8 592.2 763.4 595.1 765.3 598.1C767.1 601.2 758.2 606.8 756.7 610.0Z" fill="#bddbac" opacity=".6"/>
<path d="M706.3 500.0C705.9 504.8 703.4 509.6 701.1 512.9C698.8 516.2 695.6 519.2 692.5 519.9C689.5 520.6 685.6 519.2 682.9 517.1C680.3 514.9 678.5 511.2 676.6 506.8C674.7 502.4 671.3 496.5 671.6 490.7C671.9 485.0 674.8 475.8 678.5 472.3C682.2 468.8 689.7 467.5 693.9 469.5C698.1 471.5 701.5 479.1 703.6 484.2C705.7 489.2 706.7 495.2 706.3 500.0Z" fill="#bddbac" opacity=".6"/>
<path d="M704.4 290.0C705.6 298.5 704.0 316.4 700.4 321.1C696.8 325.8 688.1 316.7 682.7 317.9C677.3 319.2 672.6 330.3 667.8 328.5C662.9 326.8 655.5 316.8 653.4 307.6C651.3 298.5 653.0 283.3 655.2 273.6C657.5 263.9 662.3 253.0 667.1 249.3C671.8 245.6 679.4 247.7 683.8 251.2C688.1 254.7 689.6 263.6 693.1 270.1C696.5 276.5 703.1 281.5 704.4 290.0Z" fill="#bddbac" opacity=".6"/>
<path d="M782.0 285.0C782.2 289.4 778.4 294.2 776.8 299.2C775.1 304.2 774.3 312.4 772.1 314.8C769.9 317.2 765.2 317.4 763.3 313.8C761.5 310.2 761.6 299.1 761.3 292.9C760.9 286.8 760.9 283.1 761.3 277.0C761.6 271.0 761.6 260.0 763.4 256.6C765.2 253.2 769.9 253.8 772.0 256.5C774.1 259.2 774.2 267.9 775.9 272.6C777.6 277.4 781.9 280.6 782.0 285.0Z" fill="#bddbac" opacity=".6"/>
<path d="M900.3 310.0C900.1 313.9 899.3 316.1 898.1 320.7C896.9 325.3 895.9 335.7 893.1 337.8C890.4 339.9 883.7 336.8 881.5 333.1C879.3 329.4 881.4 321.1 880.1 315.7C878.8 310.3 873.7 305.9 873.8 300.8C873.9 295.6 877.5 287.0 880.6 284.5C883.8 282.1 889.5 283.8 892.7 285.9C895.9 288.1 898.3 293.3 899.6 297.3C900.9 301.3 900.6 306.1 900.3 310.0Z" fill="#bddbac" opacity=".6"/>
<path d="M731.0 760.0C729.0 763.9 721.6 766.6 717.0 768.6C712.4 770.5 709.6 769.7 703.4 771.7C697.3 773.7 685.8 781.5 680.1 780.7C674.3 779.9 670.3 771.3 668.9 766.8C667.4 762.3 669.4 758.2 671.3 753.7C673.2 749.2 674.8 741.5 680.4 739.7C686.1 737.9 696.9 742.1 705.0 743.1C713.1 744.1 724.6 742.6 729.0 745.4C733.3 748.2 733.0 756.1 731.0 760.0Z" fill="#bddbac" opacity=".6"/>
<path d="M839.8 790.0C839.9 793.0 836.3 796.8 834.9 799.2C833.4 801.7 832.5 804.0 831.1 804.6C829.8 805.3 827.8 804.9 826.6 803.3C825.4 801.7 824.6 798.3 823.8 795.0C823.1 791.7 821.6 786.5 822.0 783.5C822.5 780.5 825.1 778.7 826.7 777.0C828.2 775.3 830.0 772.5 831.3 773.3C832.6 774.0 833.1 778.6 834.5 781.4C836.0 784.2 839.8 787.0 839.8 790.0Z" fill="#bddbac" opacity=".6"/>
<path d="M803.0 594.0C806.3 589.2 819.3 595.8 823.0 602.0C826.7 608.2 825.8 624.0 825.0 631.0C824.2 638.0 821.7 644.0 818.0 644.0C814.3 644.0 805.5 639.3 803.0 631.0C800.5 622.7 799.7 598.8 803.0 594.0Z" fill="#ecefc6"/>
<path d="M670.0 470.0C675.3 463.8 694.2 463.0 700.0 468.0C705.8 473.0 706.7 491.3 705.0 500.0C703.3 508.7 696.2 519.2 690.0 520.0C683.8 520.8 671.3 513.3 668.0 505.0C664.7 496.7 664.7 476.2 670.0 470.0Z" fill="#ecefc6"/>
<path d="M790.0 455.0C793.3 452.0 811.3 455.8 815.0 460.0C818.7 464.2 815.3 477.0 812.0 480.0C808.7 483.0 798.7 482.2 795.0 478.0C791.3 473.8 786.7 458.0 790.0 455.0Z" fill="#ecefc6"/>
<path d="M668.0 28.0C669.3 26.3 677.0 23.5 680.0 24.0C683.0 24.5 687.3 29.3 686.0 31.0C684.7 32.7 675.0 34.5 672.0 34.0C669.0 33.5 666.7 29.7 668.0 28.0Z" fill="#cfe5b9"/>
<path d="M700.0 26.0C701.5 24.5 708.7 20.2 711.0 20.0C713.3 19.8 715.5 23.5 714.0 25.0C712.5 26.5 704.3 28.8 702.0 29.0C699.7 29.2 698.5 27.5 700.0 26.0Z" fill="#cfe5b9"/>
<path d="M1010.0 58.0C1013.5 56.7 1020.3 55.0 1025.0 56.0C1029.7 57.0 1036.5 61.3 1038.0 64.0C1039.5 66.7 1038.7 71.0 1034.0 72.0C1029.3 73.0 1015.0 71.3 1010.0 70.0C1005.0 68.7 1004.0 66.0 1004.0 64.0C1004.0 62.0 1006.5 59.3 1010.0 58.0Z" fill="#cfe5b9"/>
<path d="M1040.0 20.0C1041.7 18.2 1051.7 18.3 1056.0 19.0C1060.3 19.7 1065.7 22.0 1066.0 24.0C1066.3 26.0 1061.3 30.0 1058.0 31.0C1054.7 32.0 1049.0 31.8 1046.0 30.0C1043.0 28.2 1038.3 21.8 1040.0 20.0Z" fill="#cfe5b9"/>
<path d="M928.0 18.0C930.0 16.2 938.2 12.7 942.0 13.0C945.8 13.3 951.0 17.7 951.0 20.0C951.0 22.3 945.5 26.3 942.0 27.0C938.5 27.7 932.3 25.5 930.0 24.0C927.7 22.5 926.0 19.8 928.0 18.0Z" fill="#cfe5b9"/>
<path d="M724.0 114.0C725.3 112.3 732.2 111.0 734.0 112.0C735.8 113.0 736.3 118.3 735.0 120.0C733.7 121.7 727.8 123.0 726.0 122.0C724.2 121.0 722.7 115.7 724.0 114.0Z" fill="#cfe5b9"/>
<path d="M685.0 100.0C686.3 98.0 693.2 96.7 695.0 98.0C696.8 99.3 697.3 106.0 696.0 108.0C694.7 110.0 688.8 111.3 687.0 110.0C685.2 108.7 683.7 102.0 685.0 100.0Z" fill="#cfe5b9"/>
<path d="M890.1 50.0C889.0 52.9 861.2 55.8 848.1 58.1C835.1 60.3 826.0 62.6 811.8 63.4C797.6 64.2 779.0 64.0 763.0 62.8C746.9 61.6 719.8 59.0 715.6 56.1C711.4 53.3 731.3 49.1 737.9 45.5C744.4 41.8 742.4 35.9 754.8 34.3C767.1 32.8 795.5 35.1 812.2 36.2C828.8 37.3 841.8 38.5 854.8 40.8C867.8 43.1 891.2 47.1 890.1 50.0Z" fill="#eff0cb" opacity=".8"/>
<path d="M930.8 85.0C927.7 88.5 912.5 89.8 905.4 92.7C898.3 95.5 895.8 101.2 888.3 102.0C880.8 102.7 867.0 99.3 860.5 97.1C854.0 95.0 855.6 92.3 849.3 89.0C843.1 85.8 821.3 80.2 823.2 77.6C825.1 74.9 849.8 74.6 860.7 73.0C871.6 71.3 877.9 67.8 888.5 67.6C899.1 67.4 917.3 68.7 924.3 71.6C931.4 74.5 934.0 81.5 930.8 85.0Z" fill="#eff0cb" opacity=".8"/>
<path d="M1041.6 110.0C1041.8 113.7 1032.7 118.0 1026.9 121.3C1021.2 124.6 1015.0 128.8 1007.0 129.9C999.1 131.1 987.9 130.0 979.2 128.0C970.5 126.0 956.0 122.0 954.9 118.2C953.9 114.4 968.7 109.4 972.8 105.0C976.8 100.7 973.7 93.8 979.2 91.9C984.6 90.1 997.9 92.6 1005.7 93.8C1013.5 95.0 1019.9 96.4 1025.9 99.2C1031.8 101.9 1041.4 106.3 1041.6 110.0Z" fill="#eff0cb" opacity=".8"/>
<path d="M1115.7 130.0C1115.7 133.5 1108.2 137.6 1103.1 140.3C1098.1 143.1 1092.2 145.4 1085.4 146.4C1078.6 147.4 1069.2 147.9 1062.3 146.4C1055.3 144.8 1045.2 140.7 1043.7 137.1C1042.1 133.4 1049.6 128.4 1052.9 124.7C1056.3 121.1 1058.4 116.8 1063.8 115.1C1069.2 113.3 1078.7 113.4 1085.2 114.2C1091.8 114.9 1098.1 117.0 1103.2 119.6C1108.3 122.3 1115.7 126.5 1115.7 130.0Z" fill="#eff0cb" opacity=".8"/>
<path d="M785.4 90.0C786.1 92.7 776.0 96.3 769.6 98.7C763.2 101.1 755.3 103.6 747.1 104.1C738.9 104.6 729.7 103.2 720.3 101.9C710.9 100.6 694.7 99.2 690.8 96.3C686.9 93.4 693.2 88.1 697.2 84.5C701.2 80.9 706.1 76.8 714.7 74.7C723.4 72.6 740.6 70.6 749.1 71.9C757.6 73.3 759.4 79.5 765.5 82.5C771.5 85.5 784.7 87.3 785.4 90.0Z" fill="#eff0cb" opacity=".8"/>
<path d="M1091.2 80.0C1093.6 82.2 1094.2 86.4 1090.1 88.4C1086.0 90.5 1073.3 92.5 1066.4 92.2C1059.6 91.9 1053.3 88.1 1048.8 86.5C1044.3 84.8 1041.9 84.1 1039.3 82.5C1036.6 80.9 1031.2 78.1 1033.0 76.7C1034.7 75.3 1044.3 74.7 1049.5 73.9C1054.7 73.1 1059.8 71.7 1064.3 71.9C1068.7 72.2 1071.6 74.1 1076.1 75.5C1080.6 76.8 1088.9 77.8 1091.2 80.0Z" fill="#eff0cb" opacity=".8"/>
<path d="M1315.0 160.0C1276.3 158.8 1315.8 157.0 1320.0 153.0C1324.2 149.0 1333.2 140.7 1340.0 136.0C1346.8 131.3 1354.7 128.2 1361.0 125.0C1367.3 121.8 1373.2 120.7 1378.0 117.0C1382.8 113.3 1386.0 106.8 1390.0 103.0C1394.0 99.2 1398.0 97.2 1402.0 94.0C1406.0 90.8 1411.3 87.8 1414.0 84.0C1416.7 80.2 1416.5 73.3 1418.0 71.0C1419.5 68.7 1421.8 71.2 1423.0 70.0C1424.2 68.8 1423.5 65.0 1425.0 64.0C1426.5 63.0 1430.0 63.0 1432.0 64.0C1434.0 65.0 1435.0 68.8 1437.0 70.0C1439.0 71.2 1441.7 70.5 1444.0 71.0C1446.3 71.5 1448.0 72.3 1451.0 73.0C1454.0 73.7 1458.5 74.8 1462.0 75.0C1465.5 75.2 1468.0 74.0 1472.0 74.0C1476.0 74.0 1482.8 74.3 1486.0 75.0C1489.2 75.7 1489.3 75.2 1491.0 78.0C1492.7 80.8 1494.2 87.3 1496.0 92.0C1497.8 96.7 1499.7 102.2 1502.0 106.0C1504.3 109.8 1506.8 113.0 1510.0 115.0C1513.2 117.0 1515.7 117.7 1521.0 118.0C1526.3 118.3 1539.2 114.7 1542.0 117.0C1544.8 119.3 1537.5 127.3 1538.0 132.0C1538.5 136.7 1542.7 140.3 1545.0 145.0C1547.3 149.7 1590.3 157.5 1552.0 160.0C1513.7 162.5 1353.7 161.2 1315.0 160.0Z" fill="#85caf9"/>
<path d="M1404.0 -3.0C1407.8 -4.7 1422.0 -5.5 1427.0 -3.0C1432.0 -0.5 1433.8 7.7 1434.0 12.0C1434.2 16.3 1428.8 18.3 1428.0 23.0C1427.2 27.7 1429.8 36.7 1429.0 40.0C1428.2 43.3 1424.8 42.7 1423.0 43.0C1421.2 43.3 1420.3 42.5 1418.0 42.0C1415.7 41.5 1412.2 41.5 1409.0 40.0C1405.8 38.5 1400.3 35.7 1399.0 33.0C1397.7 30.3 1401.5 26.0 1401.0 24.0C1400.5 22.0 1395.8 22.3 1396.0 21.0C1396.2 19.7 1400.7 18.3 1402.0 16.0C1403.3 13.7 1403.7 10.2 1404.0 7.0C1404.3 3.8 1400.2 -1.3 1404.0 -3.0Z" fill="#85caf9"/>
<path d="M1189.0 30.0C1191.3 27.0 1200.7 28.7 1204.0 26.0C1207.3 23.3 1207.5 14.8 1209.0 14.0C1210.5 13.2 1211.0 18.3 1213.0 21.0C1215.0 23.7 1219.0 26.8 1221.0 30.0C1223.0 33.2 1224.2 36.3 1225.0 40.0C1225.8 43.7 1227.2 48.5 1226.0 52.0C1224.8 55.5 1221.2 59.0 1218.0 61.0C1214.8 63.0 1211.3 62.8 1207.0 64.0C1202.7 65.2 1195.7 67.0 1192.0 68.0C1188.3 69.0 1186.5 71.5 1185.0 70.0C1183.5 68.5 1182.5 61.7 1183.0 59.0C1183.5 56.3 1186.8 56.5 1188.0 54.0C1189.2 51.5 1189.8 48.0 1190.0 44.0C1190.2 40.0 1186.7 33.0 1189.0 30.0Z" fill="#85caf9"/>
<path d="M1185.0 113.0C1185.6 111.8 1190.2 106.8 1192.0 106.0C1193.8 105.2 1205.4 103.8 1207.0 104.0C1208.6 104.2 1211.6 107.2 1211.0 108.0C1210.4 108.8 1200.8 112.2 1200.0 113.0C1199.2 113.8 1202.7 117.2 1202.0 118.0C1201.3 118.8 1193.4 121.8 1192.0 122.0C1190.6 122.2 1185.6 120.8 1185.0 120.0C1184.4 119.2 1184.4 114.2 1185.0 113.0Z" fill="#85caf9"/>
<path d="M1218.0 143.0C1217.8 142.3 1224.5 139.8 1226.0 140.0C1227.5 140.2 1235.8 144.3 1236.0 145.0C1236.2 145.7 1229.5 148.2 1228.0 148.0C1226.5 147.8 1218.2 143.7 1218.0 143.0Z" fill="#85caf9"/>
<path d="M1205.0 146.0C1205.5 145.5 1211.3 143.8 1212.0 144.0C1212.7 144.2 1213.5 148.5 1213.0 149.0C1212.5 149.5 1206.7 150.2 1206.0 150.0C1205.3 149.8 1204.5 146.5 1205.0 146.0Z" fill="#85caf9"/>
<path d="M1289.0 15.0C1289.4 13.8 1296.7 4.2 1298.0 4.0C1299.3 3.8 1305.4 10.8 1305.0 12.0C1304.6 13.2 1294.3 17.8 1293.0 18.0C1291.7 18.2 1288.6 16.2 1289.0 15.0Z" fill="#85caf9"/>
<path d="M1326.0 16.0C1326.7 15.8 1338.4 9.1 1340.0 8.0C1341.6 6.9 1345.2 3.5 1345.0 3.0C1344.8 2.5 1339.1 1.4 1338.0 2.0C1336.9 2.6 1333.0 8.8 1332.0 10.0C1331.0 11.2 1325.3 16.2 1326.0 16.0Z" fill="#85caf9"/>
<path d="M1310.0 68.0C1310.1 67.3 1314.2 64.8 1315.0 65.0C1315.8 65.2 1320.1 69.3 1320.0 70.0C1319.9 70.7 1314.8 73.2 1314.0 73.0C1313.2 72.8 1309.9 68.7 1310.0 68.0Z" fill="#85caf9"/>
<path d="M1341.0 66.0C1341.7 65.3 1348.8 63.7 1350.0 64.0C1351.2 64.3 1356.2 69.2 1356.0 70.0C1355.8 70.8 1349.2 73.8 1348.0 74.0C1346.8 74.2 1342.6 72.7 1342.0 72.0C1341.4 71.3 1340.3 66.7 1341.0 66.0Z" fill="#85caf9"/>
<path d="M1270.0 84.0C1270.8 83.2 1277.0 81.5 1278.0 82.0C1279.0 82.5 1282.3 88.9 1282.0 90.0C1281.7 91.1 1275.2 94.8 1274.0 95.0C1272.8 95.2 1268.3 92.9 1268.0 92.0C1267.7 91.1 1269.2 84.8 1270.0 84.0Z" fill="#85caf9"/>
<path d="M1250.0 85.0C1251.3 84.9 1267.0 87.4 1268.0 88.0C1269.0 88.6 1263.3 91.9 1262.0 92.0C1260.7 92.1 1253.0 89.6 1252.0 89.0C1251.0 88.4 1248.7 85.1 1250.0 85.0Z" fill="#85caf9"/>
<path d="M1708.0 76.0C1708.5 75.2 1719.8 73.8 1722.0 74.0C1724.2 74.2 1733.3 77.2 1734.0 78.0C1734.7 78.8 1731.5 82.5 1730.0 83.0C1728.5 83.5 1717.8 84.6 1716.0 84.0C1714.2 83.4 1707.5 76.8 1708.0 76.0Z" fill="#85caf9"/>
<path d="M1732.0 82.0C1732.4 81.2 1735.8 81.2 1736.0 82.0C1736.2 82.8 1735.4 91.2 1735.0 92.0C1734.6 92.8 1731.2 92.8 1731.0 92.0C1730.8 91.2 1731.6 82.8 1732.0 82.0Z" fill="#85caf9"/>
<path d="M1672.0 90.0C1672.3 89.2 1676.7 87.4 1677.0 88.0C1677.3 88.6 1676.3 96.2 1676.0 97.0C1675.7 97.8 1673.3 98.6 1673.0 98.0C1672.7 97.4 1671.7 90.8 1672.0 90.0Z" fill="#85caf9"/>
<path d="M1790.0 16.0C1790.5 15.0 1798.5 9.3 1800.0 8.0C1801.5 6.7 1807.0 0.2 1808.0 0.0C1809.0 -0.2 1812.5 4.5 1812.0 6.0C1811.5 7.5 1803.5 16.8 1802.0 18.0C1800.5 19.2 1795.0 20.2 1794.0 20.0C1793.0 19.8 1789.5 17.0 1790.0 16.0Z" fill="#85caf9"/>
<path d="M1786.0 -2.0C1786.4 -3.2 1795.1 -2.8 1796.0 -2.0C1796.9 -1.2 1797.4 6.8 1797.0 8.0C1796.6 9.2 1791.9 12.8 1791.0 12.0C1790.1 11.2 1785.6 -0.8 1786.0 -2.0Z" fill="#85caf9"/>
<path d="M1810.0 2.0C1810.3 1.0 1817.0 -2.2 1818.0 -2.0C1819.0 -1.8 1822.3 3.0 1822.0 4.0C1821.7 5.0 1815.0 10.2 1814.0 10.0C1813.0 9.8 1809.7 3.0 1810.0 2.0Z" fill="#85caf9"/>
<path d="M1862.0 12.0C1862.6 11.0 1873.5 6.0 1875.0 6.0C1876.5 6.0 1880.6 11.0 1880.0 12.0C1879.4 13.0 1869.5 18.0 1868.0 18.0C1866.5 18.0 1861.4 13.0 1862.0 12.0Z" fill="#85caf9"/>
<path d="M1884.0 10.0C1884.3 8.8 1894.3 2.2 1896.0 2.0C1897.7 1.8 1904.3 6.8 1904.0 8.0C1903.7 9.2 1893.7 15.8 1892.0 16.0C1890.3 16.2 1883.7 11.2 1884.0 10.0Z" fill="#85caf9"/>
<path d="M1900.0 18.0C1900.6 17.0 1910.7 10.2 1912.0 10.0C1913.3 9.8 1916.6 15.0 1916.0 16.0C1915.4 17.0 1906.3 21.8 1905.0 22.0C1903.7 22.2 1899.4 19.0 1900.0 18.0Z" fill="#85caf9"/>
<path d="M1803.0 90.0C1803.2 88.6 1809.2 77.0 1810.0 76.0C1810.8 75.0 1813.2 76.6 1813.0 78.0C1812.8 79.4 1807.8 92.0 1807.0 93.0C1806.2 94.0 1802.8 91.4 1803.0 90.0Z" fill="#85caf9"/>
<path d="M1866.0 95.0C1866.2 93.8 1872.1 84.6 1873.0 84.0C1873.9 83.4 1877.2 86.8 1877.0 88.0C1876.8 89.2 1870.9 97.4 1870.0 98.0C1869.1 98.6 1865.8 96.2 1866.0 95.0Z" fill="#85caf9"/>
<path d="M1580.0 98.0C1580.6 97.2 1589.0 90.4 1590.0 90.0C1591.0 89.6 1592.6 92.2 1592.0 93.0C1591.4 93.8 1584.0 99.6 1583.0 100.0C1582.0 100.4 1579.4 98.8 1580.0 98.0Z" fill="#85caf9"/>
<path d="M1748.0 133.0C1748.2 132.2 1751.2 130.1 1752.0 130.0C1752.8 129.9 1756.5 131.4 1757.0 132.0C1757.5 132.6 1758.3 136.7 1758.0 137.0C1757.7 137.3 1753.7 135.8 1753.0 136.0C1752.3 136.2 1750.4 139.2 1750.0 139.0C1749.6 138.8 1747.8 133.8 1748.0 133.0Z" fill="#85caf9"/>
<path d="M1722.0 136.0C1722.2 134.8 1726.3 134.8 1727.0 136.0C1727.7 137.2 1729.5 147.5 1730.0 150.0C1730.5 152.5 1733.2 164.7 1733.0 166.0C1732.8 167.3 1728.8 167.3 1728.0 166.0C1727.2 164.7 1724.5 152.5 1724.0 150.0C1723.5 147.5 1721.8 137.2 1722.0 136.0Z" fill="#85caf9"/>
<path d="M1700.0 198.0C1701.8 197.5 1719.5 197.6 1722.0 198.0C1724.5 198.4 1730.2 202.4 1730.0 203.0C1729.8 203.6 1721.8 204.6 1720.0 205.0C1718.2 205.4 1709.7 208.1 1708.0 208.0C1706.3 207.9 1700.7 204.8 1700.0 204.0C1699.3 203.2 1698.2 198.5 1700.0 198.0Z" fill="#85caf9"/>
<path d="M1845.0 172.0C1845.3 171.1 1851.2 169.5 1852.0 170.0C1852.8 170.5 1855.3 177.1 1855.0 178.0C1854.7 178.9 1848.8 181.5 1848.0 181.0C1847.2 180.5 1844.7 172.9 1845.0 172.0Z" fill="#85caf9"/>
<path d="M1720.0 170.0C1720.3 169.3 1725.3 167.7 1726.0 168.0C1726.7 168.3 1728.3 173.3 1728.0 174.0C1727.7 174.7 1722.7 176.3 1722.0 176.0C1721.3 175.7 1719.7 170.7 1720.0 170.0Z" fill="#85caf9"/>
<path d="M1698.0 247.0C1698.7 245.3 1705.0 249.5 1706.0 251.0C1707.0 252.5 1709.2 263.0 1710.0 265.0C1710.8 267.0 1716.2 274.0 1716.0 275.0C1715.8 276.0 1709.5 277.3 1708.0 277.0C1706.5 276.7 1698.8 273.5 1698.0 271.0C1697.2 268.5 1697.3 248.7 1698.0 247.0Z" fill="#85caf9"/>
<path d="M1698.0 279.0C1698.8 278.3 1707.3 282.0 1708.0 283.0C1708.7 284.0 1706.8 290.3 1706.0 291.0C1705.2 291.7 1698.7 292.0 1698.0 291.0C1697.3 290.0 1697.2 279.7 1698.0 279.0Z" fill="#85caf9"/>
<path d="M1725.0 287.0C1725.8 286.0 1733.1 284.5 1734.0 285.0C1734.9 285.5 1736.3 291.8 1736.0 293.0C1735.7 294.2 1730.9 298.7 1730.0 299.0C1729.1 299.3 1725.4 298.0 1725.0 297.0C1724.6 296.0 1724.2 288.0 1725.0 287.0Z" fill="#85caf9"/>
<path d="M1716.0 344.0C1715.7 341.8 1717.3 338.3 1720.0 336.0C1722.7 333.7 1725.2 333.0 1732.0 330.0C1738.8 327.0 1751.2 321.1 1761.0 318.0C1770.8 314.9 1785.3 313.2 1791.0 311.5C1796.7 309.8 1791.3 308.7 1795.0 307.5C1798.7 306.3 1807.3 305.2 1813.0 304.5C1818.7 303.8 1824.2 304.4 1829.0 303.5C1833.8 302.6 1837.7 301.4 1841.5 299.4C1845.3 297.4 1849.7 292.0 1851.7 291.3C1853.7 290.6 1855.4 292.0 1853.7 295.4C1852.0 298.8 1844.2 305.4 1841.5 311.5C1838.8 317.6 1840.2 327.1 1837.5 331.8C1834.8 336.5 1830.2 337.9 1825.4 339.9C1820.7 341.9 1815.4 343.1 1809.0 344.0C1802.6 344.9 1794.0 344.5 1787.0 345.0C1780.0 345.5 1774.8 346.0 1767.0 347.0C1759.2 348.0 1747.5 350.7 1740.0 351.0C1732.5 351.3 1726.0 350.2 1722.0 349.0C1718.0 347.8 1716.3 346.2 1716.0 344.0Z" fill="#85caf9"/>
<path d="M1696.0 368.0C1697.7 365.0 1712.3 366.0 1716.0 366.0C1719.7 366.0 1737.5 367.7 1740.0 368.0C1742.5 368.3 1746.2 369.0 1745.5 370.0C1744.8 371.0 1734.1 378.3 1732.0 380.0C1729.9 381.7 1722.0 388.9 1720.0 390.5C1718.0 392.1 1710.0 397.6 1708.0 398.6C1706.0 399.6 1697.0 404.6 1696.0 402.0C1695.0 399.4 1694.3 371.0 1696.0 368.0Z" fill="#85caf9"/>
<path d="M1902.0 241.0C1904.8 239.4 1923.1 233.1 1925.0 233.0C1926.9 232.9 1926.2 238.8 1925.0 240.0C1923.8 241.2 1912.8 245.4 1910.0 247.0C1907.2 248.6 1894.5 257.5 1892.0 259.0C1889.5 260.5 1881.2 264.8 1880.0 265.0C1878.8 265.2 1877.0 263.1 1878.0 262.0C1879.0 260.9 1890.0 253.8 1892.0 252.0C1894.0 250.2 1899.2 242.6 1902.0 241.0Z" fill="#85caf9"/>
<path d="M1830.0 282.0C1830.4 281.2 1837.2 276.2 1838.0 276.0C1838.8 275.8 1840.4 279.2 1840.0 280.0C1839.6 280.8 1833.8 285.8 1833.0 286.0C1832.2 286.2 1829.6 282.8 1830.0 282.0Z" fill="#85caf9"/>
<path d="M1909.0 498.0C1908.3 501.7 1910.8 508.5 1907.0 516.0C1903.2 523.5 1891.3 537.0 1886.0 543.0C1880.7 549.0 1876.5 548.0 1875.0 552.0C1873.5 556.0 1877.3 562.5 1877.0 567.0C1876.7 571.5 1875.2 575.2 1873.0 579.0C1870.8 582.8 1866.7 586.3 1864.0 590.0C1861.3 593.7 1859.2 596.8 1857.0 601.0C1854.8 605.2 1852.8 610.8 1851.0 615.0C1849.2 619.2 1846.5 622.0 1846.0 626.0C1845.5 630.0 1846.8 633.8 1848.0 639.0C1849.2 644.2 1851.5 651.3 1853.0 657.0C1854.5 662.7 1857.2 668.5 1857.0 673.0C1856.8 677.5 1853.5 681.2 1852.0 684.0C1850.5 686.8 1850.8 687.8 1848.0 690.0C1845.2 692.2 1838.7 694.8 1835.0 697.0C1831.3 699.2 1828.3 700.0 1826.0 703.0C1823.7 706.0 1820.2 712.7 1821.0 715.0C1821.8 717.3 1830.2 715.5 1831.0 717.0C1831.8 718.5 1829.8 722.5 1826.0 724.0C1822.2 725.5 1812.8 725.3 1808.0 726.0C1803.2 726.7 1799.3 726.5 1797.0 728.0C1794.7 729.5 1797.0 731.7 1794.0 735.0C1791.0 738.3 1783.5 744.3 1779.0 748.0C1774.5 751.7 1770.8 755.0 1767.0 757.0C1763.2 759.0 1759.7 758.5 1756.0 760.0C1752.3 761.5 1748.0 763.0 1745.0 766.0C1742.0 769.0 1739.8 774.5 1738.0 778.0C1736.2 781.5 1736.2 784.0 1734.0 787.0C1731.8 790.0 1728.5 793.0 1725.0 796.0C1721.5 799.0 1717.5 802.3 1713.0 805.0C1708.5 807.7 1700.5 797.0 1698.0 812.0C1695.5 827.0 1659.3 881.2 1698.0 895.0C1736.7 908.8 1891.3 965.2 1930.0 895.0C1968.7 824.8 1931.8 543.5 1930.0 474.0C1928.2 404.5 1921.3 475.7 1919.0 478.0C1916.7 480.3 1917.3 485.3 1916.0 488.0C1914.7 490.7 1912.2 492.3 1911.0 494.0C1909.8 495.7 1909.7 494.3 1909.0 498.0Z" fill="#85caf9"/>
<path d="M1871.0 498.0C1868.7 499.8 1863.2 507.0 1862.0 511.0C1860.8 515.0 1862.5 518.7 1864.0 522.0C1865.5 525.3 1868.3 528.3 1871.0 531.0C1873.7 533.7 1877.5 536.0 1880.0 538.0C1882.5 540.0 1886.0 544.3 1886.0 543.0C1886.0 541.7 1882.3 534.5 1880.0 530.0C1877.7 525.5 1872.7 521.0 1872.0 516.0C1871.3 511.0 1876.2 503.0 1876.0 500.0C1875.8 497.0 1873.3 496.2 1871.0 498.0Z" fill="#85caf9"/>
<path d="M1832.6 522.5C1836.0 520.7 1846.1 517.6 1848.3 518.0C1850.5 518.4 1848.2 522.8 1846.0 524.7C1843.8 526.6 1837.1 525.8 1834.8 529.2C1832.5 532.6 1831.2 540.5 1832.0 545.0C1832.8 549.5 1837.3 551.5 1839.3 556.0C1841.3 560.5 1841.2 568.2 1843.8 572.0C1846.4 575.8 1852.8 575.7 1855.0 578.7C1857.2 581.7 1857.7 586.6 1857.3 590.0C1856.9 593.4 1854.3 594.4 1852.8 598.9C1851.2 603.4 1849.1 612.4 1848.0 616.9C1846.9 621.4 1848.0 625.3 1846.0 626.0C1844.0 626.7 1838.0 624.3 1836.0 621.3C1834.0 618.3 1835.2 611.6 1834.0 607.9C1832.8 604.2 1828.7 601.9 1829.0 598.9C1829.3 595.9 1834.3 592.5 1836.0 589.9C1837.7 587.2 1839.8 585.6 1839.3 583.0C1838.8 580.4 1834.9 577.0 1833.0 574.0C1831.1 571.0 1828.7 568.3 1828.0 565.0C1827.3 561.7 1829.2 558.1 1829.0 554.0C1828.8 549.9 1827.2 544.6 1827.0 540.4C1826.8 536.2 1827.1 532.0 1828.0 529.0C1828.9 526.0 1829.2 524.3 1832.6 522.5Z" fill="#85caf9"/>
<path d="M1821.0 671.0C1824.0 670.2 1833.7 673.4 1839.0 673.0C1844.3 672.6 1850.1 667.8 1852.8 668.5C1855.5 669.2 1856.1 674.5 1855.0 677.5C1853.9 680.5 1849.4 683.9 1846.0 686.5C1842.6 689.1 1839.3 691.5 1834.8 693.0C1830.3 694.5 1823.1 695.8 1819.0 695.5C1814.9 695.2 1808.9 692.5 1810.0 691.0C1811.1 689.5 1821.7 688.4 1825.8 686.5C1829.9 684.6 1835.6 681.3 1834.8 679.8C1834.0 678.3 1823.3 679.0 1821.0 677.5C1818.7 676.0 1818.0 671.8 1821.0 671.0Z" fill="#85caf9"/>
<path d="M661.0 291.0C661.1 290.1 667.5 284.4 668.5 284.8C669.5 285.2 673.6 295.1 673.5 296.0C673.4 296.9 668.0 296.4 667.0 296.0C666.0 295.6 660.9 291.9 661.0 291.0Z" fill="#85caf9"/>
<path d="M655.0 311.0C655.6 311.0 659.9 317.0 660.0 318.0C660.1 319.0 656.6 323.0 656.0 323.0C655.4 323.0 653.1 319.0 653.0 318.0C652.9 317.0 654.4 311.0 655.0 311.0Z" fill="#85caf9"/>
<path d="M741.5 340.4C741.8 339.7 744.8 340.8 745.0 341.6C745.2 342.4 743.8 349.3 743.5 350.0C743.2 350.7 742.2 350.8 742.0 350.0C741.8 349.2 741.2 341.1 741.5 340.4Z" fill="#85caf9"/>
<path d="M784.8 383.5C785.0 382.8 787.8 382.7 788.0 383.5C788.2 384.3 787.2 392.7 787.0 393.4C786.8 394.1 785.7 392.8 785.5 392.0C785.3 391.2 784.6 384.2 784.8 383.5Z" fill="#85caf9"/>
<path d="M786.0 399.6C786.5 399.3 793.3 404.9 793.4 405.7C793.5 406.5 787.6 410.0 787.0 409.5C786.4 409.0 785.5 399.9 786.0 399.6Z" fill="#85caf9"/>
<path d="M695.0 438.0C695.2 436.8 696.9 437.7 697.0 439.0C697.1 440.3 696.0 452.8 695.7 454.0C695.5 455.2 694.1 455.3 694.0 454.0C693.9 452.7 694.8 439.2 695.0 438.0Z" fill="#85caf9"/>
<path d="M876.0 690.0C876.4 689.3 880.6 688.4 881.0 689.0C881.4 689.6 881.4 696.3 881.0 697.0C880.6 697.7 876.4 697.6 876.0 697.0C875.6 696.4 875.6 690.7 876.0 690.0Z" fill="#85caf9"/>
<path d="M652.0 612.0C652.7 610.7 658.7 607.8 660.0 606.0C661.3 604.2 667.2 591.2 668.0 590.0C668.8 588.8 670.5 590.5 670.0 592.0C669.5 593.5 663.3 605.5 662.0 608.0C660.7 610.5 654.8 620.8 654.0 622.0C653.2 623.2 652.2 622.8 652.0 622.0C651.8 621.2 651.3 613.3 652.0 612.0Z" fill="#85caf9"/>
<path d="M1075.0 -2.0C1075.7 -2.3 1083.3 -2.3 1084.0 -2.0C1084.7 -1.7 1083.7 1.7 1083.0 2.0C1082.3 2.3 1076.7 2.3 1076.0 2.0C1075.3 1.7 1074.3 -1.7 1075.0 -2.0Z" fill="#85caf9"/>
<path d="M652.0 12.0C652.1 11.2 656.3 4.5 657.0 4.0C657.7 3.5 660.1 5.2 660.0 6.0C659.9 6.8 656.7 13.5 656.0 14.0C655.3 14.5 651.9 12.8 652.0 12.0Z" fill="#85caf9"/>
<path d="M1794.7 140.0C1795.0 141.2 1794.6 143.2 1794.2 144.5C1793.7 145.9 1792.6 148.1 1791.7 148.0C1790.9 147.8 1790.1 144.3 1789.2 143.7C1788.2 143.1 1786.7 144.9 1786.1 144.3C1785.4 143.7 1785.0 141.1 1785.4 140.0C1785.7 138.9 1787.4 139.0 1787.9 137.7C1788.4 136.4 1787.6 133.1 1788.3 132.1C1788.9 131.1 1791.1 130.7 1791.8 131.6C1792.5 132.5 1791.9 136.1 1792.3 137.5C1792.8 138.9 1794.4 138.8 1794.7 140.0Z" fill="#85caf9"/>
<path d="M1800.4 134.0C1800.4 134.8 1798.8 135.9 1798.2 136.6C1797.6 137.4 1797.5 138.0 1796.9 138.7C1796.3 139.4 1795.3 141.2 1794.6 141.1C1793.9 141.0 1792.9 139.1 1792.8 137.9C1792.7 136.7 1793.9 135.1 1794.0 134.0C1794.2 132.9 1793.6 132.1 1793.7 131.3C1793.9 130.5 1794.6 129.4 1795.1 129.2C1795.6 129.0 1796.3 129.5 1796.8 130.0C1797.2 130.5 1797.1 131.3 1797.7 132.0C1798.3 132.6 1800.3 133.2 1800.4 134.0Z" fill="#85caf9"/>
<path d="M1802.5 142.0C1802.7 142.7 1803.3 144.5 1803.0 144.9C1802.6 145.2 1801.1 143.8 1800.5 144.0C1799.8 144.2 1799.5 146.0 1799.0 146.0C1798.6 146.0 1797.8 144.9 1797.7 144.2C1797.6 143.5 1798.4 142.7 1798.4 142.0C1798.5 141.3 1797.9 140.8 1798.0 140.0C1798.1 139.3 1798.5 138.0 1799.0 137.7C1799.5 137.4 1800.5 137.7 1800.9 138.1C1801.3 138.6 1801.1 140.0 1801.4 140.7C1801.6 141.3 1802.2 141.3 1802.5 142.0Z" fill="#85caf9"/>
<path d="M1811.9 144.0C1812.1 144.9 1810.9 146.1 1810.2 147.0C1809.5 148.0 1808.6 149.7 1807.8 149.6C1807.0 149.5 1806.0 146.9 1805.3 146.3C1804.5 145.7 1803.8 146.2 1803.5 145.8C1803.3 145.4 1804.1 144.8 1803.8 144.0C1803.6 143.2 1801.7 141.5 1801.9 141.0C1802.1 140.5 1804.2 141.0 1805.0 141.1C1805.9 141.2 1806.1 141.5 1806.8 141.6C1807.4 141.7 1808.1 141.4 1809.0 141.8C1809.8 142.2 1811.7 143.1 1811.9 144.0Z" fill="#85caf9"/>
<path d="M1816.2 140.0C1816.3 140.7 1815.8 142.0 1815.2 142.3C1814.6 142.7 1813.3 142.2 1812.7 142.2C1812.1 142.1 1812.1 141.8 1811.4 141.9C1810.7 141.9 1809.0 142.8 1808.6 142.5C1808.1 142.2 1808.7 140.8 1808.8 140.0C1808.9 139.2 1808.6 138.2 1809.1 137.9C1809.5 137.6 1810.9 138.2 1811.5 138.3C1812.0 138.4 1811.9 138.5 1812.5 138.4C1813.1 138.3 1814.3 137.6 1814.9 137.9C1815.5 138.2 1816.2 139.3 1816.2 140.0Z" fill="#85caf9"/>
<path d="M1826.6 138.0C1826.4 138.9 1824.7 138.7 1824.3 140.0C1823.9 141.4 1824.9 145.5 1824.2 146.2C1823.5 147.0 1821.5 145.1 1820.2 144.5C1819.0 143.9 1816.9 143.7 1816.7 142.6C1816.5 141.5 1819.1 139.6 1819.1 138.0C1819.0 136.4 1816.2 133.8 1816.5 133.2C1816.9 132.7 1819.9 135.3 1821.1 134.8C1822.4 134.3 1823.3 130.2 1824.1 130.2C1824.9 130.2 1825.4 133.3 1825.9 134.6C1826.3 135.9 1826.9 137.1 1826.6 138.0Z" fill="#85caf9"/>
<path d="M1829.4 148.0C1829.6 149.1 1829.7 150.7 1829.4 152.3C1829.1 153.9 1828.5 157.4 1827.8 157.5C1827.0 157.6 1825.7 154.3 1825.1 153.1C1824.4 152.0 1824.5 151.4 1824.0 150.6C1823.4 149.7 1822.0 148.9 1821.9 148.0C1821.8 147.1 1823.1 145.6 1823.6 145.0C1824.2 144.3 1824.7 144.2 1825.2 143.9C1825.8 143.7 1826.4 143.3 1826.8 143.6C1827.2 143.9 1827.4 145.0 1827.8 145.7C1828.2 146.5 1829.1 146.9 1829.4 148.0Z" fill="#85caf9"/>
<path d="M1832.1 156.0C1832.1 156.6 1832.2 157.4 1832.0 157.9C1831.7 158.4 1831.3 158.6 1830.7 159.1C1830.2 159.5 1829.3 161.0 1828.8 160.8C1828.4 160.6 1828.4 158.7 1828.1 157.9C1827.8 157.1 1827.0 156.6 1827.0 156.0C1827.0 155.4 1828.0 154.9 1828.4 154.4C1828.7 153.9 1828.9 152.8 1829.2 152.8C1829.6 152.7 1830.0 153.8 1830.5 154.0C1830.9 154.3 1831.6 153.9 1831.8 154.2C1832.1 154.6 1832.1 155.4 1832.1 156.0Z" fill="#85caf9"/>
<path d="M1819.5 146.0C1819.6 146.7 1821.1 147.7 1821.0 148.2C1820.9 148.7 1819.6 149.0 1819.0 149.0C1818.4 149.0 1817.9 148.2 1817.4 148.0C1816.8 147.8 1816.2 148.0 1815.6 147.7C1815.0 147.4 1813.5 146.5 1813.7 146.0C1813.8 145.5 1816.0 145.6 1816.5 144.9C1817.0 144.3 1816.4 142.5 1816.8 142.2C1817.2 142.0 1818.3 143.0 1818.9 143.3C1819.5 143.7 1820.3 143.8 1820.4 144.2C1820.5 144.7 1819.4 145.3 1819.5 146.0Z" fill="#85caf9"/>
<path d="M1743.3 160.0C1743.3 161.1 1741.6 162.2 1740.9 163.1C1740.2 164.1 1740.0 165.1 1739.2 165.7C1738.5 166.3 1737.5 166.9 1736.5 166.8C1735.5 166.7 1733.5 166.4 1733.2 165.2C1732.9 164.1 1734.5 161.7 1734.6 160.0C1734.7 158.3 1733.4 156.4 1733.7 155.3C1734.0 154.2 1735.6 153.4 1736.5 153.1C1737.5 152.8 1738.7 152.9 1739.4 153.5C1740.1 154.1 1740.3 155.7 1740.9 156.8C1741.6 157.9 1743.3 158.9 1743.3 160.0Z" fill="#85caf9"/>
<path d="M1745.4 170.0C1745.0 170.9 1744.2 171.1 1743.8 171.6C1743.4 172.1 1743.2 172.8 1742.8 173.0C1742.4 173.2 1742.1 172.6 1741.3 172.7C1740.5 172.8 1738.4 174.1 1738.0 173.6C1737.6 173.2 1738.7 170.9 1739.0 170.0C1739.3 169.1 1739.5 168.5 1739.9 168.1C1740.2 167.6 1740.6 168.0 1741.3 167.2C1741.9 166.5 1742.8 163.8 1743.7 163.6C1744.5 163.4 1746.1 164.9 1746.4 166.0C1746.7 167.0 1745.8 169.1 1745.4 170.0Z" fill="#85caf9"/>
<path d="M1854.7 178.0C1854.3 179.3 1853.2 180.1 1852.5 180.8C1851.9 181.5 1851.5 181.9 1850.9 182.2C1850.3 182.5 1849.7 182.7 1849.0 182.5C1848.3 182.4 1847.2 182.1 1846.9 181.4C1846.6 180.6 1847.4 179.1 1847.4 178.0C1847.4 176.9 1846.7 175.4 1846.9 174.7C1847.2 173.9 1848.2 174.5 1849.1 173.6C1849.9 172.8 1850.9 169.8 1851.8 169.7C1852.8 169.5 1854.3 171.4 1854.8 172.8C1855.2 174.2 1855.1 176.7 1854.7 178.0Z" fill="#85caf9"/>
<path d="M1858.1 170.0C1858.2 170.6 1857.1 170.8 1856.8 171.8C1856.5 172.7 1856.8 175.4 1856.4 175.6C1855.9 175.8 1854.8 173.7 1854.2 173.1C1853.7 172.5 1853.0 172.5 1852.9 172.0C1852.8 171.5 1853.5 170.7 1853.5 170.0C1853.5 169.3 1852.8 168.5 1852.9 167.9C1853.0 167.3 1853.6 166.6 1854.1 166.3C1854.6 166.0 1855.5 165.8 1855.9 166.2C1856.4 166.5 1856.3 167.7 1856.7 168.4C1857.1 169.0 1858.1 169.4 1858.1 170.0Z" fill="#85caf9"/>
<path d="M1709.0 156.0C1708.8 156.9 1707.6 157.1 1707.2 157.8C1706.8 158.5 1707.0 160.1 1706.7 160.4C1706.4 160.6 1705.9 159.6 1705.5 159.4C1705.0 159.2 1704.0 159.7 1703.8 159.2C1703.6 158.6 1704.2 156.8 1704.4 156.0C1704.5 155.2 1704.6 154.9 1704.7 154.2C1704.9 153.4 1704.9 151.8 1705.3 151.4C1705.6 151.0 1706.1 151.7 1706.7 151.8C1707.2 151.9 1708.2 151.5 1708.6 152.2C1709.0 152.9 1709.2 155.1 1709.0 156.0Z" fill="#85caf9"/>
<path d="M1715.1 176.0C1715.1 177.2 1715.4 178.8 1715.0 179.7C1714.7 180.6 1713.8 181.2 1713.1 181.5C1712.4 181.9 1711.6 182.0 1710.9 181.8C1710.1 181.5 1708.9 181.0 1708.7 180.1C1708.4 179.1 1709.1 177.1 1709.3 176.0C1709.6 174.9 1709.8 174.7 1710.0 173.6C1710.2 172.4 1710.2 169.0 1710.6 168.9C1711.1 168.8 1711.9 172.3 1712.6 172.9C1713.3 173.5 1714.6 171.9 1715.0 172.4C1715.4 172.9 1715.1 174.8 1715.1 176.0Z" fill="#85caf9"/>
<path d="M1393.0 122.0C1394.5 120.3 1400.2 116.3 1404.0 114.0C1407.8 111.7 1413.8 108.7 1416.0 108.0C1418.2 107.3 1418.7 108.5 1417.0 110.0C1415.3 111.5 1409.7 114.7 1406.0 117.0C1402.3 119.3 1397.2 123.2 1395.0 124.0C1392.8 124.8 1391.5 123.7 1393.0 122.0Z" fill="#cde4b8"/>
<path d="M1418.0 156.0C1418.3 154.3 1422.0 150.2 1426.0 148.0C1430.0 145.8 1439.2 143.3 1442.0 143.0C1444.8 142.7 1444.7 144.7 1443.0 146.0C1441.3 147.3 1435.2 149.0 1432.0 151.0C1428.8 153.0 1426.3 157.2 1424.0 158.0C1421.7 158.8 1417.7 157.7 1418.0 156.0Z" fill="#cde4b8"/>
<path d="M1427.0 80.0C1426.5 79.2 1430.8 73.5 1433.0 72.0C1435.2 70.5 1439.5 70.2 1440.0 71.0C1440.5 71.8 1438.2 75.5 1436.0 77.0C1433.8 78.5 1427.5 80.8 1427.0 80.0Z" fill="#cde4b8"/>
<ellipse cx="1510" cy="127" rx="5" ry="1.8" fill="#fbf4d8"/>
<path d="M1206.0 50.0C1206.8 48.0 1212.3 45.3 1214.0 46.0C1215.7 46.7 1216.8 52.0 1216.0 54.0C1215.2 56.0 1210.7 58.7 1209.0 58.0C1207.3 57.3 1205.2 52.0 1206.0 50.0Z" fill="#cde4b8"/>
<path d="M1210.0 34.0C1210.8 32.5 1215.7 31.0 1217.0 32.0C1218.3 33.0 1218.8 38.5 1218.0 40.0C1217.2 41.5 1213.3 42.0 1212.0 41.0C1210.7 40.0 1209.2 35.5 1210.0 34.0Z" fill="#cde4b8"/>
<path d="M751.0 148.0C751.3 146.3 751.5 140.7 753.0 138.0C754.5 135.3 757.2 133.2 760.0 132.0C762.8 130.8 766.0 131.0 770.0 131.0C774.0 131.0 779.8 133.0 784.0 132.0C788.2 131.0 791.8 127.8 795.0 125.0C798.2 122.2 801.3 117.0 803.0 115.0C804.7 113.0 804.7 113.3 805.0 113.0" fill="none" stroke="#85caf9" stroke-width="3" stroke-linecap="round" stroke-linejoin="round" opacity="1"/>
<path d="M795.0 125.0C795.8 123.8 798.3 120.0 800.0 118.0C801.7 116.0 804.2 113.8 805.0 113.0" fill="none" stroke="#85caf9" stroke-width="5" stroke-linecap="round" stroke-linejoin="round" opacity="1"/>
<path d="M803.0 115.0C804.0 116.7 808.2 121.0 809.0 125.0C809.8 129.0 808.2 136.7 808.0 139.0" fill="none" stroke="#85caf9" stroke-width="2.2" stroke-linecap="round" stroke-linejoin="round" opacity="1"/>
<path d="M652.0 128.0C654.0 126.3 660.2 120.5 664.0 118.0C667.8 115.5 671.8 111.5 675.0 113.0C678.2 114.5 676.2 125.0 683.0 127.0C689.8 129.0 709.0 124.0 716.0 125.0C723.0 126.0 720.2 131.3 725.0 133.0C729.8 134.7 740.7 134.3 745.0 135.0C749.3 135.7 750.0 136.7 751.0 137.0" fill="none" stroke="#9fd2f5" stroke-width="0.8" stroke-linecap="round" stroke-linejoin="round" opacity="1"/>
<path d="M805.0 113.0C814.2 112.5 846.8 110.8 860.0 110.0C873.2 109.2 878.5 107.3 884.0 108.0C889.5 108.7 891.5 113.0 893.0 114.0" fill="none" stroke="#9fd2f5" stroke-width="0.8" stroke-linecap="round" stroke-linejoin="round" opacity="1"/>
<path d="M893.0 114.0C894.0 113.0 897.2 108.0 899.0 108.0C900.8 108.0 901.3 114.2 904.0 114.0C906.7 113.8 911.5 108.0 915.0 107.0C918.5 106.0 921.8 106.7 925.0 108.0C928.2 109.3 932.0 112.2 934.0 115.0C936.0 117.8 935.2 122.8 937.0 125.0C938.8 127.2 943.5 126.3 945.0 128.0C946.5 129.7 943.8 132.7 946.0 135.0C948.2 137.3 953.7 141.2 958.0 142.0C962.3 142.8 969.7 140.3 972.0 140.0" fill="none" stroke="#85caf9" stroke-width="3.2" stroke-linecap="round" stroke-linejoin="round" opacity="1"/>
<path d="M940.0 118.0 L941.0 128.0" fill="none" stroke="#85caf9" stroke-width="3.5" stroke-linecap="round" stroke-linejoin="round" opacity="1"/>
<path d="M958.0 142.0C958.8 143.3 960.2 147.7 963.0 150.0C965.8 152.3 973.0 155.0 975.0 156.0" fill="none" stroke="#9fd2f5" stroke-width="0.8" stroke-linecap="round" stroke-linejoin="round" opacity="1"/>
<path d="M1809.0 548.0C1807.7 550.5 1801.6 559.4 1801.0 563.0C1800.4 566.6 1802.9 567.9 1805.6 569.7C1808.2 571.5 1812.8 572.5 1816.9 574.0C1821.0 575.5 1826.6 577.2 1830.3 578.7C1834.0 580.2 1837.8 582.3 1839.3 583.0" fill="none" stroke="#85caf9" stroke-width="3.5" stroke-linecap="round" stroke-linejoin="round" opacity="1"/>
<path d="M1807.9 578.7C1810.9 580.6 1821.1 587.0 1825.8 589.9C1830.5 592.8 1834.3 595.0 1836.0 596.0" fill="none" stroke="#85caf9" stroke-width="2" stroke-linecap="round" stroke-linejoin="round" opacity="1"/>
<path d="M1802.0 614.6C1804.5 615.0 1812.2 615.6 1816.9 616.9C1821.6 618.2 1825.9 621.0 1830.0 622.5C1834.1 624.0 1839.7 625.2 1841.6 625.8" fill="none" stroke="#85caf9" stroke-width="2.5" stroke-linecap="round" stroke-linejoin="round" opacity="1"/>
<path d="M1751.7 639.0C1753.9 640.2 1759.0 644.1 1765.0 646.0C1771.0 647.9 1783.8 649.8 1787.6 650.6" fill="none" stroke="#85caf9" stroke-width="2.6" stroke-linecap="round" stroke-linejoin="round" opacity="1"/>
<path d="M1717.0 619.0 L1723.6 625.8" fill="none" stroke="#85caf9" stroke-width="2.4" stroke-linecap="round" stroke-linejoin="round" opacity="1"/>
<path d="M1700.0 792.0C1701.0 791.7 1704.7 789.3 1706.0 790.0C1707.3 790.7 1707.7 795.0 1708.0 796.0" fill="none" stroke="#85caf9" stroke-width="3" stroke-linecap="round" stroke-linejoin="round" opacity="1"/>
<path d="M1812.0 368.0C1812.3 370.0 1813.3 376.7 1814.0 380.0C1814.7 383.3 1815.7 386.7 1816.0 388.0" fill="none" stroke="#85caf9" stroke-width="1.6" stroke-linecap="round" stroke-linejoin="round" opacity="1"/>
<path d="M1819.0 363.0C1819.5 364.8 1820.7 370.7 1822.0 374.0C1823.3 377.3 1826.2 381.5 1827.0 383.0" fill="none" stroke="#85caf9" stroke-width="1.6" stroke-linecap="round" stroke-linejoin="round" opacity="1"/>
<path d="M1808.0 375.0 L1805.0 386.0" fill="none" stroke="#85caf9" stroke-width="1.6" stroke-linecap="round" stroke-linejoin="round" opacity="1"/>
<path d="M1716.0 430.0C1718.3 426.7 1724.3 415.0 1730.0 410.0C1735.7 405.0 1744.2 401.3 1750.0 400.0C1755.8 398.7 1760.8 400.0 1765.0 402.0C1769.2 404.0 1772.2 410.0 1775.0 412.0C1777.8 414.0 1780.8 413.7 1782.0 414.0" fill="none" stroke="#9fd2f5" stroke-width="0.8" stroke-linecap="round" stroke-linejoin="round" opacity="1"/>
<path d="M1716.0 430.0C1715.7 432.5 1713.0 440.0 1714.0 445.0C1715.0 450.0 1720.7 457.5 1722.0 460.0" fill="none" stroke="#9fd2f5" stroke-width="0.8" stroke-linecap="round" stroke-linejoin="round" opacity="1"/>
<path d="M823.0 478.7C823.2 480.4 826.5 485.9 824.0 488.6C821.5 491.3 813.5 492.3 808.0 494.8C802.5 497.3 795.9 500.3 791.0 503.4C786.1 506.5 784.0 510.9 778.6 513.3C773.2 515.7 764.6 515.9 758.8 518.0C753.0 520.1 747.7 522.8 744.0 525.7C740.3 528.6 740.2 534.4 736.5 535.6C732.8 536.8 725.8 533.3 721.7 533.0C717.6 532.7 714.9 531.9 712.0 534.0C709.1 536.1 707.3 540.7 704.4 545.5C701.5 550.3 698.2 557.0 694.5 562.8C690.8 568.5 685.8 575.1 682.0 580.0C678.2 584.9 673.7 590.0 672.0 592.0" fill="none" stroke="#9fd2f5" stroke-width="1" stroke-linecap="round" stroke-linejoin="round" opacity="1"/>
<path d="M804.5 530.6C805.9 534.3 809.1 547.3 813.0 553.0C816.9 558.7 822.2 563.0 828.0 565.0C833.8 567.0 840.4 563.7 847.8 565.0C855.2 566.3 864.4 570.6 872.6 572.7C880.9 574.8 890.7 576.4 897.3 577.6C903.9 578.8 909.5 579.6 912.0 580.0" fill="none" stroke="#9fd2f5" stroke-width="1" stroke-linecap="round" stroke-linejoin="round" opacity="1"/>
<path d="M768.7 594.7C772.2 594.9 782.3 595.1 790.0 596.0C797.7 596.9 809.0 596.8 815.0 600.0C821.0 603.2 823.8 608.3 826.0 615.0C828.2 621.7 829.0 632.5 828.0 640.0C827.0 647.5 823.3 653.3 820.0 660.0C816.7 666.7 811.8 672.5 808.0 680.0C804.2 687.5 800.0 695.0 797.0 705.0C794.0 715.0 792.7 729.2 790.0 740.0C787.3 750.8 783.5 761.7 781.0 770.0C778.5 778.3 776.0 786.7 775.0 790.0" fill="none" stroke="#9fd2f5" stroke-width="1" stroke-linecap="round" stroke-linejoin="round" opacity="1"/>
<path d="M652.0 794.0C655.0 793.0 663.7 787.0 670.0 788.0C676.3 789.0 684.2 798.5 690.0 800.0C695.8 801.5 700.8 795.7 705.0 797.0C709.2 798.3 711.7 806.2 715.0 808.0C718.3 809.8 722.0 810.2 725.0 808.0C728.0 805.8 730.0 798.8 733.0 795.0C736.0 791.2 741.0 788.3 743.0 785.0C745.0 781.7 744.7 776.7 745.0 775.0" fill="none" stroke="#9fd2f5" stroke-width="1" stroke-linecap="round" stroke-linejoin="round" opacity="1"/>
<path d="M1724.0 140.0C1726.7 139.7 1736.0 139.0 1740.0 138.0C1744.0 137.0 1746.7 134.7 1748.0 134.0" fill="none" stroke="#9fd2f5" stroke-width="1" stroke-linecap="round" stroke-linejoin="round" opacity="1"/>
<path d="M1752.0 132.0C1752.0 130.3 1750.7 124.3 1752.0 122.0C1753.3 119.7 1757.0 117.3 1760.0 118.0C1763.0 118.7 1765.0 124.3 1770.0 126.0C1775.0 127.7 1786.7 127.7 1790.0 128.0" fill="none" stroke="#9fd2f5" stroke-width="1" stroke-linecap="round" stroke-linejoin="round" opacity="1"/>
<path d="M1779.0 28.0C1777.5 30.0 1772.8 36.0 1770.0 40.0C1767.2 44.0 1763.3 50.0 1762.0 52.0" fill="none" stroke="#85caf9" stroke-width="1.6" stroke-linecap="round" stroke-linejoin="round" opacity="1"/>
<path d="M652.0 8.0C654.2 8.7 657.0 11.3 665.0 12.0C673.0 12.7 689.2 13.0 700.0 12.0C710.8 11.0 722.5 8.0 730.0 6.0C737.5 4.0 742.5 1.0 745.0 0.0" fill="none" stroke="#fbe59b" stroke-width="1.6" stroke-linecap="round" stroke-linejoin="round" opacity="1"/>
<path d="M960.0 -2.0C962.5 0.0 968.3 6.0 975.0 10.0C981.7 14.0 991.8 20.8 1000.0 22.0C1008.2 23.2 1015.7 18.5 1024.0 17.0C1032.3 15.5 1041.5 13.8 1050.0 13.0C1058.5 12.2 1066.7 11.8 1075.0 12.0C1083.3 12.2 1092.3 13.2 1100.0 14.0C1107.7 14.8 1114.3 14.8 1121.0 17.0C1127.7 19.2 1128.7 25.0 1140.0 27.0C1151.3 29.0 1174.0 30.2 1189.0 29.0C1204.0 27.8 1219.8 21.7 1230.0 20.0C1240.2 18.3 1241.7 18.2 1250.0 19.0C1258.3 19.8 1275.0 24.0 1280.0 25.0" fill="none" stroke="#fbe59b" stroke-width="1.6" stroke-linecap="round" stroke-linejoin="round" opacity="1"/>
<path d="M1121.0 17.0C1120.0 20.8 1115.5 32.3 1115.0 40.0C1114.5 47.7 1117.5 59.2 1118.0 63.0" fill="none" stroke="#fbe59b" stroke-width="1.4" stroke-linecap="round" stroke-linejoin="round" opacity="1"/>
<path d="M1118.0 63.0C1118.7 70.8 1121.0 95.0 1122.0 110.0C1123.0 125.0 1123.7 145.8 1124.0 153.0" fill="none" stroke="#f7d9a0" stroke-width="1.2" stroke-linecap="round" stroke-linejoin="round" opacity="1"/>
<path d="M1270.0 22.0C1272.5 23.7 1278.3 28.2 1285.0 32.0C1291.7 35.8 1300.5 40.3 1310.0 45.0C1319.5 49.7 1332.8 55.8 1342.0 60.0C1351.2 64.2 1360.3 66.7 1365.0 70.0C1369.7 73.3 1369.5 76.3 1370.0 80.0C1370.5 83.7 1366.7 89.5 1368.0 92.0C1369.3 94.5 1374.3 94.7 1378.0 95.0C1381.7 95.3 1388.0 94.2 1390.0 94.0" fill="none" stroke="#fbe59b" stroke-width="1.6" stroke-linecap="round" stroke-linejoin="round" opacity="1"/>
<path d="M1225.0 30.0C1226.2 32.5 1230.2 40.0 1232.0 45.0C1233.8 50.0 1234.7 55.0 1236.0 60.0C1237.3 65.0 1237.8 71.0 1240.0 75.0C1242.2 79.0 1244.0 83.5 1249.0 84.0C1254.0 84.5 1261.5 79.3 1270.0 78.0C1278.5 76.7 1290.0 75.7 1300.0 76.0C1310.0 76.3 1318.7 79.0 1330.0 80.0C1341.3 81.0 1356.3 81.2 1368.0 82.0C1379.7 82.8 1392.2 87.0 1400.0 85.0C1407.8 83.0 1410.8 73.8 1415.0 70.0C1419.2 66.2 1422.2 67.0 1425.0 62.0C1427.8 57.0 1429.5 45.3 1432.0 40.0C1434.5 34.7 1432.0 32.8 1440.0 30.0C1448.0 27.2 1465.0 24.3 1480.0 23.0C1495.0 21.7 1511.7 21.7 1530.0 22.0C1548.3 22.3 1570.0 23.7 1590.0 25.0C1610.0 26.3 1640.0 29.2 1650.0 30.0" fill="none" stroke="#fbe59b" stroke-width="1.6" stroke-linecap="round" stroke-linejoin="round" opacity="1"/>
<path d="M1425.0 62.0C1428.3 63.0 1434.2 65.8 1445.0 68.0C1455.8 70.2 1477.5 73.3 1490.0 75.0C1502.5 76.7 1512.5 75.5 1520.0 78.0C1527.5 80.5 1531.2 84.7 1535.0 90.0C1538.8 95.3 1542.2 103.3 1543.0 110.0C1543.8 116.7 1539.2 122.5 1540.0 130.0C1540.8 137.5 1546.7 150.8 1548.0 155.0" fill="none" stroke="#fbe59b" stroke-width="1.6" stroke-linecap="round" stroke-linejoin="round" opacity="1"/>
<path d="M1580.0 42.0C1583.3 42.7 1590.0 46.3 1600.0 46.0C1610.0 45.7 1630.0 41.7 1640.0 40.0C1650.0 38.3 1656.7 36.7 1660.0 36.0" fill="none" stroke="#fbe59b" stroke-width="1.6" stroke-linecap="round" stroke-linejoin="round" opacity="1"/>
<path d="M1663.0 88.0C1665.8 87.5 1674.3 83.8 1680.0 85.0C1685.7 86.2 1693.2 90.8 1697.0 95.0C1700.8 99.2 1699.2 103.3 1703.0 110.0C1706.8 116.7 1717.5 128.3 1720.0 135.0C1722.5 141.7 1718.7 145.0 1718.0 150.0C1717.3 155.0 1716.3 162.5 1716.0 165.0" fill="none" stroke="#fbe59b" stroke-width="1.6" stroke-linecap="round" stroke-linejoin="round" opacity="1"/>
<path d="M1703.0 110.0 L1724.0 107.0" fill="none" stroke="#fbe59b" stroke-width="1.6" stroke-linecap="round" stroke-linejoin="round" opacity="1"/>
<path d="M1716.0 165.0C1717.0 168.3 1720.2 179.2 1722.0 185.0C1723.8 190.8 1722.3 197.5 1727.0 200.0C1731.7 202.5 1739.5 198.7 1750.0 200.0C1760.5 201.3 1779.2 202.2 1790.0 208.0C1800.8 213.8 1806.7 228.8 1815.0 235.0C1823.3 241.2 1833.2 243.5 1840.0 245.0C1846.8 246.5 1853.3 244.2 1856.0 244.0" fill="none" stroke="#fbe59b" stroke-width="1.2" stroke-linecap="round" stroke-linejoin="round" opacity="1"/>
<path d="M1727.0 200.0C1725.0 205.0 1716.5 218.3 1715.0 230.0C1713.5 241.7 1716.3 258.3 1718.0 270.0C1719.7 281.7 1723.0 290.2 1725.0 300.0C1727.0 309.8 1729.2 324.2 1730.0 329.0" fill="none" stroke="#fbe59b" stroke-width="1.2" stroke-linecap="round" stroke-linejoin="round" opacity="1"/>
<path d="M1736.0 297.0C1741.7 296.8 1757.7 298.5 1770.0 296.0C1782.3 293.5 1799.2 286.3 1810.0 282.0C1820.8 277.7 1830.0 274.5 1835.0 270.0C1840.0 265.5 1836.5 259.3 1840.0 255.0C1843.5 250.7 1853.3 245.8 1856.0 244.0" fill="none" stroke="#fbe59b" stroke-width="1.2" stroke-linecap="round" stroke-linejoin="round" opacity="1"/>
<path d="M1730.0 329.0C1735.0 327.5 1748.3 323.5 1760.0 320.0C1771.7 316.5 1786.7 311.3 1800.0 308.0C1813.3 304.7 1828.3 306.0 1840.0 300.0C1851.7 294.0 1860.0 280.3 1870.0 272.0C1880.0 263.7 1891.7 255.3 1900.0 250.0C1908.3 244.7 1916.7 241.7 1920.0 240.0" fill="none" stroke="#f7d9a0" stroke-width="1.1" stroke-linecap="round" stroke-linejoin="round" opacity="1"/>
<path d="M1747.0 365.0C1754.2 364.5 1774.5 363.3 1790.0 362.0C1805.5 360.7 1825.0 356.5 1840.0 357.0C1855.0 357.5 1866.7 360.3 1880.0 365.0C1893.3 369.7 1913.3 381.7 1920.0 385.0" fill="none" stroke="#f5d5a3" stroke-width="0.85" stroke-linecap="round" stroke-linejoin="round" opacity="1"/>
<path d="M1840.0 357.0C1840.8 362.5 1843.3 381.2 1845.0 390.0C1846.7 398.8 1848.3 401.7 1850.0 410.0C1851.7 418.3 1851.0 425.0 1855.0 440.0C1859.0 455.0 1870.8 490.0 1874.0 500.0" fill="none" stroke="#f5d5a3" stroke-width="0.85" stroke-linecap="round" stroke-linejoin="round" opacity="1"/>
<path d="M1702.0 445.0C1708.3 445.0 1725.3 443.8 1740.0 445.0C1754.7 446.2 1773.3 451.5 1790.0 452.0C1806.7 452.5 1826.0 450.0 1840.0 448.0C1854.0 446.0 1861.8 437.2 1874.0 440.0C1886.2 442.8 1906.5 460.8 1913.0 465.0" fill="none" stroke="#f5d5a3" stroke-width="0.85" stroke-linecap="round" stroke-linejoin="round" opacity="1"/>
<path d="M1709.0 477.0C1714.2 477.5 1726.5 480.2 1740.0 480.0C1753.5 479.8 1775.0 475.2 1790.0 476.0C1805.0 476.8 1816.0 481.0 1830.0 485.0C1844.0 489.0 1866.7 497.5 1874.0 500.0" fill="none" stroke="#f5d5a3" stroke-width="0.85" stroke-linecap="round" stroke-linejoin="round" opacity="1"/>
<path d="M1874.0 500.0C1870.0 503.3 1860.7 512.3 1850.0 520.0C1839.3 527.7 1816.7 541.7 1810.0 546.0" fill="none" stroke="#f5d5a3" stroke-width="0.85" stroke-linecap="round" stroke-linejoin="round" opacity="1"/>
<path d="M1810.0 546.0C1808.3 551.7 1802.3 570.2 1800.0 580.0C1797.7 589.8 1797.7 595.0 1796.0 605.0C1794.3 615.0 1794.3 629.2 1790.0 640.0C1785.7 650.8 1775.8 663.3 1770.0 670.0C1764.2 676.7 1757.5 678.3 1755.0 680.0" fill="none" stroke="#f5d5a3" stroke-width="0.85" stroke-linecap="round" stroke-linejoin="round" opacity="1"/>
<path d="M1702.0 600.0C1708.3 596.7 1727.0 586.7 1740.0 580.0C1753.0 573.3 1768.3 565.7 1780.0 560.0C1791.7 554.3 1805.0 548.3 1810.0 546.0" fill="none" stroke="#f5d5a3" stroke-width="0.85" stroke-linecap="round" stroke-linejoin="round" opacity="1"/>
<path d="M1796.0 605.0C1799.2 607.5 1808.3 615.0 1815.0 620.0C1821.7 625.0 1832.5 632.5 1836.0 635.0" fill="none" stroke="#f5d5a3" stroke-width="0.85" stroke-linecap="round" stroke-linejoin="round" opacity="1"/>
<path d="M1702.0 740.0C1706.7 733.3 1721.2 710.0 1730.0 700.0C1738.8 690.0 1746.7 680.0 1755.0 680.0C1763.3 680.0 1776.0 689.0 1780.0 700.0C1784.0 711.0 1779.2 738.3 1779.0 746.0" fill="none" stroke="#f5d5a3" stroke-width="0.85" stroke-linecap="round" stroke-linejoin="round" opacity="1"/>
<path d="M1755.0 680.0C1749.2 681.7 1728.8 688.7 1720.0 690.0C1711.2 691.3 1705.0 688.3 1702.0 688.0" fill="none" stroke="#f5d5a3" stroke-width="0.85" stroke-linecap="round" stroke-linejoin="round" opacity="1"/>
<path d="M1747.0 365.0C1745.8 370.8 1744.5 387.5 1740.0 400.0C1735.5 412.5 1725.2 427.2 1720.0 440.0C1714.8 452.8 1710.8 470.8 1709.0 477.0" fill="none" stroke="#f5d5a3" stroke-width="0.85" stroke-linecap="round" stroke-linejoin="round" opacity="1"/>
<path d="M1913.0 465.0C1910.0 467.5 1901.5 474.2 1895.0 480.0C1888.5 485.8 1877.5 496.7 1874.0 500.0" fill="none" stroke="#f5d5a3" stroke-width="0.85" stroke-linecap="round" stroke-linejoin="round" opacity="1"/>
<path d="M1856.0 244.0 L1862.0 275.0" fill="none" stroke="#f5d5a3" stroke-width="0.85" stroke-linecap="round" stroke-linejoin="round" opacity="1"/>
<path d="M652.0 232.0C656.7 230.7 670.3 223.3 680.0 224.0C689.7 224.7 701.3 235.7 710.0 236.0C718.7 236.3 723.7 227.3 732.0 226.0C740.3 224.7 753.7 224.8 760.0 228.0C766.3 231.2 767.5 238.8 770.0 245.0C772.5 251.2 771.7 257.5 775.0 265.0C778.3 272.5 786.7 284.2 790.0 290.0C793.3 295.8 790.0 297.8 795.0 300.0C800.0 302.2 809.2 303.3 820.0 303.0C830.8 302.7 849.2 300.7 860.0 298.0C870.8 295.3 877.5 287.5 885.0 287.0C892.5 286.5 900.7 291.5 905.0 295.0C909.3 298.5 910.0 305.8 911.0 308.0" fill="none" stroke="#f5d5a3" stroke-width="0.85" stroke-linecap="round" stroke-linejoin="round" opacity="1"/>
<path d="M732.0 226.0C736.7 223.3 752.8 213.8 760.0 210.0C767.2 206.2 766.7 204.3 775.0 203.0C783.3 201.7 800.8 204.2 810.0 202.0C819.2 199.8 823.3 196.2 830.0 190.0C836.7 183.8 844.7 170.0 850.0 165.0C855.3 160.0 857.0 159.5 862.0 160.0C867.0 160.5 871.7 166.3 880.0 168.0C888.3 169.7 906.7 169.7 912.0 170.0" fill="none" stroke="#f5d5a3" stroke-width="0.85" stroke-linecap="round" stroke-linejoin="round" opacity="1"/>
<path d="M795.0 300.0C795.3 305.0 795.3 320.8 797.0 330.0C798.7 339.2 803.5 348.8 805.0 355.0C806.5 361.2 805.8 365.0 806.0 367.0" fill="none" stroke="#f5d5a3" stroke-width="0.85" stroke-linecap="round" stroke-linejoin="round" opacity="1"/>
<path d="M652.0 438.0C658.3 435.8 677.0 427.7 690.0 425.0C703.0 422.3 716.7 423.5 730.0 422.0C743.3 420.5 758.3 416.3 770.0 416.0C781.7 415.7 790.0 416.0 800.0 420.0C810.0 424.0 820.3 435.7 830.0 440.0C839.7 444.3 844.3 446.0 858.0 446.0C871.7 446.0 903.0 441.0 912.0 440.0" fill="none" stroke="#f5d5a3" stroke-width="0.85" stroke-linecap="round" stroke-linejoin="round" opacity="1"/>
<path d="M806.0 367.0C811.7 368.3 832.7 369.5 840.0 375.0C847.3 380.5 847.3 390.8 850.0 400.0C852.7 409.2 855.5 418.3 856.0 430.0C856.5 441.7 853.5 456.8 853.0 470.0C852.5 483.2 852.2 495.8 853.0 509.0C853.8 522.2 856.5 537.2 858.0 549.0C859.5 560.8 860.7 576.5 862.0 580.0C863.3 583.5 865.3 571.7 866.0 570.0" fill="none" stroke="#f5d5a3" stroke-width="0.85" stroke-linecap="round" stroke-linejoin="round" opacity="1"/>
<path d="M853.0 509.0C857.5 507.5 870.2 504.8 880.0 500.0C889.8 495.2 906.7 483.3 912.0 480.0" fill="none" stroke="#f5d5a3" stroke-width="0.85" stroke-linecap="round" stroke-linejoin="round" opacity="1"/>
<path d="M853.0 509.0C858.3 510.8 877.2 514.8 885.0 520.0C892.8 525.2 895.5 535.8 900.0 540.0C904.5 544.2 910.0 544.2 912.0 545.0" fill="none" stroke="#f5d5a3" stroke-width="0.85" stroke-linecap="round" stroke-linejoin="round" opacity="1"/>
<path d="M853.0 509.0C847.5 508.8 830.5 507.0 820.0 508.0C809.5 509.0 801.7 513.3 790.0 515.0C778.3 516.7 759.2 514.7 750.0 518.0C740.8 521.3 741.3 532.5 735.0 535.0C728.7 537.5 719.5 531.3 712.0 533.0C704.5 534.7 700.0 542.5 690.0 545.0C680.0 547.5 658.3 547.5 652.0 548.0" fill="none" stroke="#f5d5a3" stroke-width="0.85" stroke-linecap="round" stroke-linejoin="round" opacity="1"/>
<path d="M652.0 712.0C655.7 712.8 664.0 719.3 674.0 717.0C684.0 714.7 702.7 702.2 712.0 698.0C721.3 693.8 723.7 691.7 730.0 692.0C736.3 692.3 745.0 696.8 750.0 700.0C755.0 703.2 753.3 708.7 760.0 711.0C766.7 713.3 783.3 714.2 790.0 714.0C796.7 713.8 793.3 710.3 800.0 710.0C806.7 709.7 820.0 711.3 830.0 712.0C840.0 712.7 846.3 714.8 860.0 714.0C873.7 713.2 903.3 708.2 912.0 707.0" fill="none" stroke="#f5d5a3" stroke-width="0.85" stroke-linecap="round" stroke-linejoin="round" opacity="1"/>
<path d="M862.0 580.0C861.3 581.7 857.0 583.3 858.0 590.0C859.0 596.7 866.0 611.7 868.0 620.0C870.0 628.3 871.3 631.7 870.0 640.0C868.7 648.3 865.0 661.3 860.0 670.0C855.0 678.7 846.7 688.7 840.0 692.0C833.3 695.3 826.7 687.8 820.0 690.0C813.3 692.2 805.0 698.3 800.0 705.0C795.0 711.7 792.5 720.8 790.0 730.0C787.5 739.2 787.5 750.0 785.0 760.0C782.5 770.0 777.2 784.2 775.0 790.0C772.8 795.8 771.2 791.7 772.0 795.0C772.8 798.3 776.5 805.0 780.0 810.0C783.5 815.0 789.5 819.0 793.0 825.0C796.5 831.0 799.7 842.5 801.0 846.0" fill="none" stroke="#f5d5a3" stroke-width="0.85" stroke-linecap="round" stroke-linejoin="round" opacity="1"/>
<path d="M652.0 833.0C654.7 833.8 661.7 839.8 668.0 838.0C674.3 836.2 682.7 823.8 690.0 822.0C697.3 820.2 706.5 827.0 712.0 827.0C717.5 827.0 719.0 821.7 723.0 822.0C727.0 822.3 729.8 828.5 736.0 829.0C742.2 829.5 751.0 825.5 760.0 825.0C769.0 824.5 783.8 824.3 790.0 826.0C796.2 827.7 795.2 831.7 797.0 835.0C798.8 838.3 798.0 841.8 801.0 846.0C804.0 850.2 810.2 856.3 815.0 860.0C819.8 863.7 819.2 865.7 830.0 868.0C840.8 870.3 866.3 875.8 880.0 874.0C893.7 872.2 906.7 859.8 912.0 857.0" fill="none" stroke="#f5d5a3" stroke-width="0.85" stroke-linecap="round" stroke-linejoin="round" opacity="1"/>
<path d="M880.0 874.0 L912.0 880.0" fill="none" stroke="#f5d5a3" stroke-width="0.85" stroke-linecap="round" stroke-linejoin="round" opacity="1"/>
<rect x="846" y="503" width="14" height="13" rx="3" fill="#ebe3d2"/>
<path d="M680.0 0.0L680.0 63.0" fill="none" stroke="#c3c3b8" stroke-width="0.9" stroke-dasharray="2 2"/>
<path d="M973.0 0.0L975.0 63.0" fill="none" stroke="#c3c3b8" stroke-width="0.9" stroke-dasharray="2 2"/>
<path d="M884.4 63.0L884.4 452.0" fill="none" stroke="#c3c3b8" stroke-width="0.9" stroke-dasharray="2 2"/>
<path d="M1117.0 63.0L1120.0 90.0L1124.0 120.0L1130.0 153.0" fill="none" stroke="#c3c3b8" stroke-width="0.9" stroke-dasharray="2 2"/>
<path d="M1189.0 0.0L1189.0 44.0" fill="none" stroke="#c3c3b8" stroke-width="0.9" stroke-dasharray="2 2"/>
<path d="M1725.0 0.0L1725.0 140.0" fill="none" stroke="#c3c3b8" stroke-width="0.9" stroke-dasharray="2 2"/>
<path d="M652.0 264.5L884.4 264.5" fill="none" stroke="#c3c3b8" stroke-width="0.9" stroke-dasharray="2 2"/>
<path d="M884.4 218.0L912.0 218.0" fill="none" stroke="#c3c3b8" stroke-width="0.9" stroke-dasharray="2 2"/>
<path d="M884.4 359.7L912.0 359.7" fill="none" stroke="#c3c3b8" stroke-width="0.9" stroke-dasharray="2 2"/>
<path d="M652.0 452.0L912.0 452.0" fill="none" stroke="#c3c3b8" stroke-width="0.9" stroke-dasharray="2 2"/>
<path d="M712.7 452.0L712.7 863.0" fill="none" stroke="#c3c3b8" stroke-width="0.9" stroke-dasharray="2 2"/>
<path d="M652.0 628.9L912.0 628.9" fill="none" stroke="#c3c3b8" stroke-width="0.9" stroke-dasharray="2 2"/>
<path d="M822.0 836.0L912.0 836.0" fill="none" stroke="#c3c3b8" stroke-width="0.9" stroke-dasharray="2 2"/>
<path d="M1716.0 380.0L1716.0 406.0L1868.0 406.0L1878.0 420.0L1890.0 435.0L1885.0 460.0L1875.0 480.0" fill="none" stroke="#c3c3b8" stroke-width="0.9" stroke-dasharray="2 2"/>
<path d="M1702.0 510.0L1850.0 510.0L1853.0 565.0L1875.0 566.0" fill="none" stroke="#c3c3b8" stroke-width="0.9" stroke-dasharray="2 2"/>
<path d="M1702.0 648.0L1850.0 648.0" fill="none" stroke="#c3c3b8" stroke-width="0.9" stroke-dasharray="2 2"/>
<path d="M1702.0 600.0L1720.0 560.0L1740.0 545.0L1770.0 520.0L1790.0 512.0" fill="none" stroke="#c3c3b8" stroke-width="0.9" stroke-dasharray="2 2"/>
<path d="M1702.0 720.0L1720.0 722.0L1750.0 758.0" fill="none" stroke="#c3c3b8" stroke-width="0.9" stroke-dasharray="2 2"/>
<path d="M1340.0 128.0L1350.0 120.0L1375.0 155.0" fill="none" stroke="#a8b8c8" stroke-width="0.9" stroke-dasharray="2 2"/>
<path d="M652.0 63.6L1189.0 63.6L1189.0 43.5L1200.0 45.0L1203.0 55.0L1205.6 70.0L1208.0 78.0L1220.0 80.0L1235.0 81.0L1236.0 88.0L1249.0 87.0L1262.0 88.0L1270.0 88.0L1282.0 92.0L1284.0 103.0L1296.0 98.0L1300.0 108.0L1312.0 112.0L1336.0 103.0L1340.0 110.0L1365.0 110.0L1370.0 115.0L1388.0 116.0L1413.0 101.0L1421.0 99.5L1511.0 153.0L1520.0 160.0" fill="none" stroke="#858585" stroke-width="1.5" stroke-linejoin="round"/>
<path d="M1920.0 264.0L1888.0 264.0L1882.0 263.0L1868.0 272.0L1853.0 290.0L1846.0 297.0L1832.0 303.0L1818.0 330.0L1753.0 330.0L1736.0 338.0L1740.0 350.0L1745.0 368.0L1720.0 382.0L1702.0 390.0" fill="none" stroke="#858585" stroke-width="1.5" stroke-linejoin="round"/>
<path d="M652.0 863.0L741.7 863.0L741.7 845.5L801.0 845.5L810.0 857.0L830.0 872.0L845.0 885.0L852.0 892.0" fill="none" stroke="#858585" stroke-width="1.5" stroke-linejoin="round"/>
<circle cx="1024" cy="18.6" r="3.3" fill="#fff" stroke="#5a5a5a" stroke-width="1.3"/>
<text x="1025" y="12.7" font-size="13" text-anchor="middle" class="ch">Brandon</text>
<text x="1025" y="12.7" font-size="13" text-anchor="middle" class="ct">Brandon</text>
<circle cx="1121" cy="16.5" r="3.3" fill="#fff" stroke="#5a5a5a" stroke-width="1.3"/>
<text x="1121" y="10.7" font-size="13" text-anchor="middle" class="ch">Winnipeg</text>
<text x="1121" y="10.7" font-size="13" text-anchor="middle" class="ct">Winnipeg</text>
<circle cx="978.5" cy="103.4" r="3.3" fill="#fff" stroke="#5a5a5a" stroke-width="1.3"/>
<text x="978" y="97.7" font-size="13" text-anchor="middle" class="ch">Minot</text>
<text x="978" y="97.7" font-size="13" text-anchor="middle" class="ct">Minot</text>
<circle cx="732" cy="226" r="3.3" fill="#fff" stroke="#5a5a5a" stroke-width="1.3"/>
<text x="732" y="221.0" font-size="13" text-anchor="middle" class="ch">Billings</text>
<text x="732" y="221.0" font-size="13" text-anchor="middle" class="ct">Billings</text>
<circle cx="1249" cy="84" r="3.3" fill="#fff" stroke="#5a5a5a" stroke-width="1.3"/>
<text x="1249" y="78.7" font-size="13" text-anchor="middle" class="ch">International Falls</text>
<text x="1249" y="78.7" font-size="13" text-anchor="middle" class="ct">International Falls</text>
<circle cx="1391" cy="94.6" r="3.3" fill="#fff" stroke="#5a5a5a" stroke-width="1.3"/>
<text x="1392" y="88.7" font-size="13" text-anchor="middle" class="ch">Thunder Bay</text>
<text x="1392" y="88.7" font-size="13" text-anchor="middle" class="ct">Thunder Bay</text>
<circle cx="1663" cy="91" r="3.3" fill="#fff" stroke="#5a5a5a" stroke-width="1.3"/>
<text x="1663" y="85.7" font-size="13" text-anchor="middle" class="ch">Timmins</text>
<text x="1663" y="85.7" font-size="13" text-anchor="middle" class="ct">Timmins</text>
<circle cx="805.8" cy="367" r="3.3" fill="#fff" stroke="#5a5a5a" stroke-width="1.3"/>
<text x="806.5" y="361.7" font-size="13" text-anchor="middle" class="ch">Casper</text>
<text x="806.5" y="361.7" font-size="13" text-anchor="middle" class="ct">Casper</text>
<circle cx="858.2" cy="445.8" r="3.3" fill="#fff" stroke="#5a5a5a" stroke-width="1.3"/>
<text x="858.3" y="440.1" font-size="13" text-anchor="middle" class="ch">Cheyenne</text>
<text x="858.3" y="440.1" font-size="13" text-anchor="middle" class="ct">Cheyenne</text>
<circle cx="852.3" cy="509" r="3.3" fill="#fff" stroke="#5a5a5a" stroke-width="1.3"/>
<text x="852.6" y="502.5" font-size="14.6" text-anchor="middle" class="ch">Denver</text>
<text x="852.6" y="502.5" font-size="14.6" text-anchor="middle" class="ct">Denver</text>
<circle cx="858" cy="549" r="3.3" fill="#fff" stroke="#5a5a5a" stroke-width="1.3"/>
<text x="858" y="544.0" font-size="13" text-anchor="middle" class="ch">Colorado Springs</text>
<text x="858" y="544.0" font-size="13" text-anchor="middle" class="ct">Colorado Springs</text>
<circle cx="819.6" cy="684.7" r="3.3" fill="#fff" stroke="#5a5a5a" stroke-width="1.3"/>
<text x="819.7" y="678.6" font-size="13" text-anchor="middle" class="ch">Santa Fe</text>
<text x="819.7" y="678.6" font-size="13" text-anchor="middle" class="ct">Santa Fe</text>
<circle cx="801" cy="846.4" r="3.3" fill="#fff" stroke="#5a5a5a" stroke-width="1.3"/>
<text x="801" y="840.7" font-size="13" text-anchor="middle" class="ch">El Paso</text>
<text x="801" y="840.7" font-size="13" text-anchor="middle" class="ct">El Paso</text>
<circle cx="1727" cy="200.7" r="3.3" fill="#fff" stroke="#5a5a5a" stroke-width="1.3"/>
<text x="1727.5" y="195.5" font-size="13" text-anchor="middle" class="ch">North Bay</text>
<text x="1727.5" y="195.5" font-size="13" text-anchor="middle" class="ct">North Bay</text>
<circle cx="1855.7" cy="244.2" r="3.3" fill="#fff" stroke="#5a5a5a" stroke-width="1.3"/>
<text x="1856" y="237.9" font-size="14.5" text-anchor="middle" class="ch">Ottawa</text>
<text x="1856" y="237.9" font-size="14.5" text-anchor="middle" class="ct">Ottawa</text>
<circle cx="1729.7" cy="329" r="3.3" fill="#fff" stroke="#5a5a5a" stroke-width="1.3"/>
<text x="1730" y="322.7" font-size="15.8" text-anchor="middle" class="ch">Toronto</text>
<text x="1730" y="322.7" font-size="15.8" text-anchor="middle" class="ct">Toronto</text>
<circle cx="1747" cy="365" r="3.3" fill="#fff" stroke="#5a5a5a" stroke-width="1.3"/>
<text x="1747" y="359.7" font-size="13" text-anchor="middle" class="ch">Buffalo</text>
<text x="1747" y="359.7" font-size="13" text-anchor="middle" class="ct">Buffalo</text>
<circle cx="1840.5" cy="357.8" r="3.3" fill="#fff" stroke="#5a5a5a" stroke-width="1.3"/>
<text x="1840.5" y="352.7" font-size="13" text-anchor="middle" class="ch">Syracuse</text>
<text x="1840.5" y="352.7" font-size="13" text-anchor="middle" class="ct">Syracuse</text>
<circle cx="1913.7" cy="465.4" r="3.3" fill="#fff" stroke="#5a5a5a" stroke-width="1.3"/>
<text x="1915" y="458.9" font-size="16.5" text-anchor="middle" class="ch">New York</text>
<text x="1915" y="458.9" font-size="16.5" text-anchor="middle" class="ct">New York</text>
<circle cx="1708.5" cy="477.5" r="3.3" fill="#fff" stroke="#5a5a5a" stroke-width="1.3"/>
<text x="1707" y="472.1" font-size="13" text-anchor="middle" class="ch">Pittsburgh</text>
<text x="1707" y="472.1" font-size="13" text-anchor="middle" class="ct">Pittsburgh</text>
<circle cx="1874" cy="499.8" r="3.3" fill="#fff" stroke="#5a5a5a" stroke-width="1.3"/>
<text x="1874" y="493.9" font-size="13.5" text-anchor="middle" class="ch">Philadelphia</text>
<text x="1874" y="493.9" font-size="13.5" text-anchor="middle" class="ct">Philadelphia</text>
<circle cx="1810" cy="546.5" r="3.3" fill="#fff" stroke="#5a5a5a" stroke-width="1.3"/>
<text x="1810" y="540.4" font-size="15.5" text-anchor="middle" class="ch">Washington</text>
<text x="1810" y="540.4" font-size="15.5" text-anchor="middle" class="ct">Washington</text>
<circle cx="1796.6" cy="605" r="3.3" fill="#fff" stroke="#5a5a5a" stroke-width="1.3"/>
<text x="1796.2" y="600.2" font-size="13" text-anchor="middle" class="ch">Richmond</text>
<text x="1796.2" y="600.2" font-size="13" text-anchor="middle" class="ct">Richmond</text>
<circle cx="1835" cy="635" r="3.3" fill="#fff" stroke="#5a5a5a" stroke-width="1.3"/>
<text x="1835.7" y="629.4" font-size="13" text-anchor="middle" class="ch">Norfolk</text>
<text x="1835.7" y="629.4" font-size="13" text-anchor="middle" class="ct">Norfolk</text>
<circle cx="1755" cy="680.4" r="3.3" fill="#fff" stroke="#5a5a5a" stroke-width="1.3"/>
<text x="1755" y="674.7" font-size="13" text-anchor="middle" class="ch">Raleigh</text>
<text x="1755" y="674.7" font-size="13" text-anchor="middle" class="ct">Raleigh</text>
<circle cx="1778.6" cy="745.5" r="3.3" fill="#fff" stroke="#5a5a5a" stroke-width="1.3"/>
<text x="1779" y="740.5" font-size="13" text-anchor="middle" class="ch">Wilmington</text>
<text x="1779" y="740.5" font-size="13" text-anchor="middle" class="ct">Wilmington</text>
<text x="1902" y="235" font-size="15" class="ch">Montreal</text>
<text x="1902" y="235" font-size="15" class="ct">Montreal</text>
<text x="1911" y="284.5" font-size="13" class="ch">Burlington</text>
<text x="1911" y="284.5" font-size="13" class="ct">Burlington</text>
<text x="667" y="134.5" font-size="13" text-anchor="end" class="ch">Great Falls</text>
<text x="667" y="134.5" font-size="13" text-anchor="end" class="ct">Great Falls</text>
<text x="668.5" y="822.3" font-size="13" text-anchor="end" class="ch">Tucson</text>
<text x="668.5" y="822.3" font-size="13" text-anchor="end" class="ct">Tucson</text>
<text x="669.5" y="858.6" font-size="12" text-anchor="end" class="ch" style="font-weight:normal">Nogales</text>
<text x="669.5" y="858.6" font-size="12" text-anchor="end" class="ct" style="font-weight:normal">Nogales</text>
<text x="660.5" y="459" font-size="16" text-anchor="end" class="ch">Salt Lake City</text>
<text x="660.5" y="459" font-size="16" text-anchor="end" class="ct">Salt Lake City</text>
<text x="1457.5" y="22.8" font-size="10.2" text-anchor="middle" letter-spacing="1.2" class="rl2">ONTARIO</text>
<text x="708.5" y="169.7" font-size="10.2" text-anchor="end" letter-spacing="1.2" class="rl2">MONTANA</text>
<text x="817.5" y="737.6" font-size="10.2" text-anchor="middle" letter-spacing="1.2" class="rl2">NEW MEXICO</text>
<text x="1715" y="700.3" font-size="10.2" text-anchor="end" letter-spacing="1.2" class="rl2">NORTH</text>
<text x="1724.5" y="713.4" font-size="10.2" text-anchor="end" letter-spacing="1.2" class="rl2">CAROLINA</text>
<!--/MAPSVG-->
</svg>
<!--MAPCTL-->
<style>
.ch{font-family:"Liberation Sans",sans-serif;fill:#fff;stroke:#fff;stroke-width:2.800px;stroke-linejoin:round;opacity:.9}
.ct{font-family:"Liberation Sans",sans-serif;fill:#4f4f4f;stroke:#4f4f4f;stroke-width:.65px}
.rl2{font-family:"Liberation Sans",sans-serif;font-weight:bold;fill:#8f8f8f;stroke:#f3f1d6;stroke-width:1.5px;paint-order:stroke fill}
#ai{left:929.200px;top:24px;width:54.800px;height:49.700px;border-radius:10px}
#tb{left:994px;top:22px;width:220px;height:53px;border-radius:13px}
#zc{left:1222px;top:21px;width:36px;height:109px;border-radius:4px;box-shadow:0 0 0 1px rgba(0,0,0,.04)}
#zc i{position:absolute;left:0;width:36px;height:1px;background:#ddd}
#loc{left:1222px;top:140px;width:36px;height:37px;border-radius:4px}
#attr{position:absolute;left:1162.500px;top:846.700px;font-size:13.600px;line-height:20px;font-weight:bold;color:#1b4a8f;letter-spacing:-.5px}
#info{position:absolute;left:1231px;top:844px;width:22px;height:22px;border-radius:50%;background:#000;color:#fff;text-align:center;font:italic bold 16px/22px "Liberation Serif",serif}
#cr{position:absolute;right:0;top:872px;height:18px;padding:0 5px 0 5px;background:rgba(255,255,255,.5);font-size:12.850px;line-height:19px;color:#333;white-space:nowrap}
</style>
<div class="ctl abs" id="ai"><svg class="abs" style="left:0;top:0;width:55px;height:50px" viewBox="1581 24 55 50"><defs><linearGradient id="aig" x1="0" y1="0" x2="0" y2="1"><stop offset="0" stop-color="#4a169c"/><stop offset=".5" stop-color="#9a2dc0"/><stop offset="1" stop-color="#e54fdb"/></linearGradient></defs><rect x="1595.900" y="35.800" width="25.300" height="25.100" rx="4.800" fill="url(#aig)"/><text transform="translate(1600.300,56.100) scale(.84,1)" font-family="Liberation Sans, sans-serif" font-size="20.500" fill="#fff" stroke="#fff" stroke-width=".55" letter-spacing="1.300">Ai</text><circle cx="1616.700" cy="40.400" r="7" fill="#fff"/><path d="M1616.600 35.600c.9 2.900 2 4 4.800 5-2.800 1-3.900 2.100-4.800 5-.9-2.900-2-4-4.800-5 2.800-1 3.900-2.100 4.800-5z" fill="#4f179f" stroke="#4f179f" stroke-width=".9" stroke-linejoin="round"/></svg></div>
<div class="ctl abs" id="tb"><svg class="abs" style="left:0;top:0;width:220px;height:53px" viewBox="1646 22 220 53" fill="none" stroke="#000" stroke-width="2.100" stroke-linecap="round" stroke-linejoin="round">
<circle cx="1672.100" cy="47.100" r="7.050"/><path d="M1677.400 52.500l4.900 4.700" />
<circle cx="1728.300" cy="45" r="4.600"/><path d="M1728.300 49.800v5.600M1720.300 55.600h16.500" stroke-linecap="butt"/>
<path d="M1774.300 40.500a1.200 1.200 0 0 1 1.200-1.200h3.800a1.200 1.200 0 0 1 1.200 1.200v9.200h8.700a1.200 1.200 0 0 1 1.200 1.200v4.300a1.800 1.800 0 0 1-1.800 1.800h-12.500a1.800 1.800 0 0 1-1.800-1.800z" stroke-width="1.900"/><path d="M1777.800 43h2.700M1777.800 46.200h2.700M1777.800 49.400h2.700M1781.500 53.800v3M1784.700 53.800v3M1787.900 53.800v3" stroke-width="1.100" stroke-linecap="butt"/>
<path d="M1832.500 45v-3.800a1 1 0 0 1 1-1h8.500a1 1 0 0 1 1 1v3.800" stroke-width="2"/><rect x="1828.300" y="44.800" width="19" height="8.600" rx="2.400" stroke-width="2.200"/><rect x="1832.300" y="50.500" width="11" height="5.800" rx=".8" fill="#fff" stroke-width="2"/><path d="M1843.300 47.800h1" stroke-width="1.200"/>
</svg></div>
<div class="ctl abs" id="zc"><i style="top:36px"></i><i style="top:72px"></i>
<svg class="abs" style="left:0;top:0;width:36px;height:109px" viewBox="1874 21 36 109"><path d="M1885 39.300h14M1892 32.300v14" stroke="#333" stroke-width="1.800" fill="none"/><path d="M1885 75.400h14" stroke="#333" stroke-width="1.800" fill="none"/><path d="M1892 100.600l5.400 11.400h-10.800z" fill="#3b4252"/><path d="M1892 123.300l5.400-11.300h-10.800z" fill="#b3b8cc"/><circle cx="1892" cy="112" r="1.700" fill="#fff"/></svg></div>
<div class="ctl abs" id="loc"><svg class="abs" style="left:8px;top:9px;width:20px;height:20px" viewBox="0 0 20 20"><path d="M17.300 2.700 3 8.700l6 1.800 2 6.300z" fill="none" stroke="#333" stroke-width="1.700" stroke-linejoin="round"/></svg></div>
<div id="attr">Attribution</div><div id="info">i</div>
<div id="cr">© MapTiler © OpenStreetMap contributors</div>

<!--/MAPCTL-->
</div>

<!-- TABLE WINDOW -->
<div id="win">
<!--WIN-->
<style>
#win .top{position:absolute;left:0;top:11px;width:790px;height:92px;background:#f4f5fa;box-shadow:0 2px 4px rgba(0,0,0,.45);z-index:3}
#win .ttl{position:absolute;left:16.500px;top:7px;font-size:17.450px;line-height:24px;color:#111;letter-spacing:-.15px;white-space:nowrap}
.radio{position:absolute;top:45px;width:22px;height:22px;border-radius:50%;border:2px solid #555}
.radio.on{border-color:#194a90}
.radio.on:after{content:"";position:absolute;left:3px;top:3px;width:12px;height:12px;border-radius:50%;background:#194a90}
.rl{position:absolute;top:51px;font-size:13.200px;line-height:20px;white-space:nowrap;letter-spacing:-.2px}
.sup{position:absolute;top:44px;font-size:14px;line-height:18px;font-weight:bold;color:#194a90}
#grid{position:absolute;left:0;top:102px;width:790px;height:572px;background:#fff;font-family:"Liberation Sans",sans-serif;overflow:hidden}
#grid .hdr{position:absolute;left:0;top:0;width:789px;height:55px;background:#fafafa;border-bottom:1px solid #dcdcdc}
#grid .flt{position:absolute;left:0;top:55px;width:789px;height:53px;background:#fafafa;border-bottom:1px solid #dcdcdc}
.hc{position:absolute;top:3px;line-height:52px;font-size:14.800px;font-weight:bold;color:#181d1f;white-space:nowrap;-webkit-text-stroke:0;letter-spacing:-.1px}
.sep{position:absolute;top:20px;width:2px;height:16px;background:#dadada}
.fi{position:absolute;top:9px;width:99px;height:35px;border:1px solid #d9d9d9;border-radius:4px;background:#fff}
.fic{position:absolute;top:19px;width:16px;height:12px}
.row{position:absolute;left:0;width:789px;height:46px;border-bottom:1px solid #dcdcdc;background:#fff}
.c{position:absolute;top:0;line-height:48px;font-size:15.100px;color:#181d1f;white-space:nowrap;letter-spacing:0}
.el{letter-spacing:-1.7px}
#pin{position:absolute;left:706px;top:0;width:84px;height:292px;border-left:1px solid #dcdcdc;background:#fff}
#pin .ph{position:absolute;left:0;top:0;width:83px;height:108px;background:#fafafa}
.zm{position:absolute;left:25.900px;width:30px;height:26px}
#hs{position:absolute;left:0;top:649.500px;width:790px;height:24.500px;background:#f1f1f1}
#foot{position:absolute;left:0;top:674px;width:790px;height:63px;background:#1a5ba8;border-radius:10px 10px 0 0;color:#fff}
#foot div{position:absolute;white-space:nowrap}
</style>
<div class="top">
 <div class="ttl">View Filtered Layer Data as:</div>
 <div class="radio on" style="left:16px"></div><div class="rl" style="left:44px;font-weight:bold;color:#194a90;font-size:13.600px;letter-spacing:0">POINT</div><div class="sup" style="left:94px">4</div>
 <div class="radio" style="left:112px"></div><div class="rl" style="left:139px;color:#222">POLYGON</div><div class="sup" style="left:211px">2</div>
 <svg class="abs" style="left:700px;top:-1px;width:90px;height:22px;overflow:visible" viewBox="0 0 90 22"><path d="M8.200 8.900h15.500" stroke="#222" stroke-width="2.300"/><rect x="44.800" y="1.500" width="14.800" height="13.400" fill="none" stroke="#555" stroke-width="1"/><rect x="42.400" y="4" width="14.900" height="13.500" fill="#f4f5fa" stroke="#333" stroke-width="1.100"/><path d="M69 2l15 14M84 2l-15 14" stroke="#000" stroke-width="2.300"/></svg>
</div>
<div id="grid">
 <div class="hdr">
  <div class="hc" style="left:18px">amenity</div><div class="sep" style="left:162px"></div>
  <div class="hc" style="left:183px">name</div><div class="sep" style="left:327px"></div>
  <div class="hc" style="left:347px">shape0</div><div class="sep" style="left:491px"></div>
  <div class="hc" style="left:512px">shape1</div><div class="sep" style="left:656px"></div>
  <div class="hc" style="left:676px">shape2</div>
 </div>
 <div class="flt">
  <div class="fi" style="left:18px"></div><div class="fi" style="left:183px"></div><div class="fi" style="left:347px"></div><div class="fi" style="left:512px"></div><div class="fi" style="left:676px"></div>
  <svg class="fic" style="left:131px" viewBox="0 0 16 12"><path d="M.5 1.500h15M3.500 6h9M6 10.500h4" stroke="#222" stroke-width="1.600" fill="none"/></svg>
  <svg class="fic" style="left:296px" viewBox="0 0 16 12"><path d="M.5 1.500h15M3.500 6h9M6 10.500h4" stroke="#222" stroke-width="1.600" fill="none"/></svg>
  <svg class="fic" style="left:460px" viewBox="0 0 16 12"><path d="M.5 1.500h15M3.500 6h9M6 10.500h4" stroke="#222" stroke-width="1.600" fill="none"/></svg>
  <svg class="fic" style="left:625px" viewBox="0 0 16 12"><path d="M.5 1.500h15M3.500 6h9M6 10.500h4" stroke="#222" stroke-width="1.600" fill="none"/></svg>
 </div>
 <div class="row" style="top:108px"><div class="c" style="left:18px">art_studio</div><div class="c" style="left:183px">Preston Singletary</div><div class="c" style="left:347px">united_states_of_<span class="el">...</span></div><div class="c" style="left:512px">Washington</div><div class="c" style="left:676px">King</div></div>
 <div class="row" style="top:154px"><div class="c" style="left:18px">art_studio</div><div class="c" style="left:183px">Anita St. Marie</div><div class="c" style="left:347px">united_states_of_<span class="el">...</span></div><div class="c" style="left:512px">Oregon</div><div class="c" style="left:676px">Multnomah</div></div>
 <div class="row" style="top:200px"><div class="c" style="left:18px">art_studio</div><div class="c" style="left:183px">Artisan Resource <span class="el">...</span></div><div class="c" style="left:347px">united_states_of_<span class="el">...</span></div><div class="c" style="left:512px">Georgia</div><div class="c" style="left:676px">Cobb</div></div>
 <div class="row" style="top:246px"><div class="c" style="left:18px">art_studio</div><div class="c" style="left:183px">Albany Art Room</div><div class="c" style="left:347px">united_states_of_<span class="el">...</span></div><div class="c" style="left:512px">New York</div><div class="c" style="left:676px">Albany</div></div>
 <div id="pin">
  <div class="ph"><div class="sep" style="left:-1px"></div><div class="hc" style="left:18px">Action</div></div>
  <div class="abs" style="left:0;top:108px;width:83px;height:184px;background:#fff"></div>
  <div class="abs" style="left:0;top:54px;width:83px;height:1px;background:#dcdcdc"></div>
  <div class="abs" style="left:0;top:107px;width:83px;height:1px;background:#dcdcdc"></div>
  <div class="abs" style="left:0;top:153px;width:83px;height:1px;background:#dcdcdc"></div>
  <div class="abs" style="left:0;top:199px;width:83px;height:1px;background:#dcdcdc"></div>
  <div class="abs" style="left:0;top:245px;width:83px;height:1px;background:#dcdcdc"></div>
  <div class="abs" style="left:0;top:291px;width:83px;height:1px;background:#dcdcdc"></div>
  <svg class="zm" style="top:114px" viewBox="0 0 30 26"><use href="#zoomin"/></svg>
  <svg class="zm" style="top:160px" viewBox="0 0 30 26"><use href="#zoomin"/></svg>
  <svg class="zm" style="top:206px" viewBox="0 0 30 26"><use href="#zoomin"/></svg>
  <svg class="zm" style="top:252px" viewBox="0 0 30 26"><use href="#zoomin"/></svg>
 </div>
</div>
<svg width="0" height="0" style="position:absolute"><defs><g id="zoomin"><path d="M18.800 12.900L26.900 18.700A1.350 1.350 0 0 1 25.400 20.900L17.200 15.100" fill="#fff" stroke="#000" stroke-width="1.500" stroke-linejoin="round"/><ellipse cx="11.500" cy="8.500" rx="9.100" ry="7.100" fill="#fff" stroke="#000" stroke-width="2"/><path d="M7.400 8.700h8.300M11.500 5v7.400" stroke="#000" stroke-width="2" fill="none"/></g></defs></svg>
<div id="hs">
 <svg class="abs" style="left:0;top:0;width:790px;height:24px" viewBox="0 0 790 24"><rect x="25" y="1.600" width="563" height="19.400" fill="#c1c1c1"/><path d="M9.500 11.500l6.500-6v12z" fill="#a3a3a3"/><path d="M698 11.500l-7-6v12z" fill="#333"/><rect x="706" y="0" width="1" height="24" fill="#dcdcdc"/><path d="M716 11.500l6-5v10z" fill="#a3a3a3"/><path d="M780 11.500l-6-5v10z" fill="#a3a3a3"/></svg>
</div>
<div id="foot">
 <div style="left:16px;top:31px;font-size:15.100px;line-height:20px;-webkit-text-stroke:.35px #fff">Items per Page: 200</div>
 <div style="left:494px;top:22px;width:120px;text-align:center;font-size:14.800px;line-height:19.500px;white-space:normal;-webkit-text-stroke:.35px #fff">1 - 4 of 4<br>entries</div>
 <div style="left:633px;top:31px;font-size:13px;line-height:20px;font-weight:bold;color:#7f9fcb;letter-spacing:.6px">PREV</div>
 <div style="left:688px;top:31px;font-size:16px;line-height:20px">1</div>
 <div style="left:716px;top:31px;font-size:13px;line-height:20px;font-weight:bold;color:#7f9fcb;letter-spacing:.6px">NEXT</div>
</div>

<!--/WIN-->
</div>

<!-- GIS PANEL -->
<div id="panel">
<!--PANEL-->
<div class="head"><h1>GIS Data</h1>
<svg class="abs" style="left:374px;top:7px;width:16px;height:16px" viewBox="0 0 16 16"><path d="M2.500 2.500l11 11M13.500 2.500l-11 11" stroke="#111" stroke-width="1.700" fill="none"/></svg>
</div>
<div class="body">
 <div id="search"><div class="txt">Art studios in united states of amer</div>
  <div class="btn"><svg class="abs" style="left:12px;top:12px;width:30px;height:30px" viewBox="0 0 30 30"><circle cx="13.500" cy="13.500" r="9.300" fill="none" stroke="#fff" stroke-width="2"/><path d="M20.300 20.300l7 7" stroke="#fff" stroke-width="2.200" stroke-linecap="round"/></svg></div>
 </div>
 <div id="sub">Art studios in united states of america</div>
 <div id="dl">Download</div>
 <div class="lnk" style="left:145px">Add on Map</div>
 <svg class="abs" style="left:228px;top:168px;width:24px;height:26px" viewBox="0 0 24 26" fill="none" stroke="#1b4a8f" stroke-width="2" stroke-linejoin="round" stroke-linecap="round"><path d="M6 5.500 2 4v17l6.500 2.500 7-2.500 6.500 2.500v-17l-4-1.500"/><path d="M8.500 12v11.500M15.500 16v5"/><path d="M12 16s-5-4.500-5-8.500a5 5 0 0 1 10 0c0 4-5 8.500-5 8.500z"/><circle cx="12" cy="7.500" r="1.700"/></svg>
 <div class="lnk" style="left:284px">Table View</div>
 <svg class="abs" style="left:361px;top:173.300px;width:20px;height:15.700px" viewBox="0 0 20 17" preserveAspectRatio="none"><rect x="0" y="0" width="20" height="17" rx="1.500" fill="#1b4a8f"/><rect x="1.600" y="5.500" width="4" height="3.800" fill="#eef1fb"/><rect x="7" y="5.500" width="11.400" height="3.800" fill="#eef1fb"/><rect x="1.600" y="11" width="4" height="3.800" fill="#eef1fb"/><rect x="7" y="11" width="11.400" height="3.800" fill="#eef1fb"/></svg>
 <div id="back">&lt; Back to Layer Data</div>
</div>

<!--/PANEL-->
</div>

<!-- SIDEBAR -->
<div id="side">
<!--SIDE-->
<div id="logo"><span style="left:41.2px;color:#1b4a8f;transform:scaleX(0.637);text-shadow:0.78px 0 #1b4a8f,-0.78px 0 #1b4a8f,0.39px 0 #1b4a8f,-0.39px 0 #1b4a8f">M</span><span style="left:81.8px;color:#1b4a8f;transform:scaleX(0.52);text-shadow:2.50px 0 #1b4a8f,-2.50px 0 #1b4a8f,1.25px 0 #1b4a8f,-1.25px 0 #1b4a8f">A</span><span style="left:111.8px;color:#1b4a8f;transform:scaleX(0.61);text-shadow:2.13px 0 #1b4a8f,-2.13px 0 #1b4a8f,1.07px 0 #1b4a8f,-1.07px 0 #1b4a8f">P</span><span style="left:145.4px;color:#fdc800;transform:scaleX(0.469);text-shadow:4.26px 0 #fdc800,-4.26px 0 #fdc800,2.13px 0 #fdc800,-2.13px 0 #fdc800">O</span><span style="left:177px;color:#fdc800;transform:scaleX(0.452);text-shadow:4.42px 0 #fdc800,-4.42px 0 #fdc800,2.21px 0 #fdc800,-2.21px 0 #fdc800">G</span></div>
<svg class="abs" style="left:30px;top:15px;width:190px;height:75px" viewBox="30 15 190 75">
 <rect x="37.500" y="75.900" width="169.600" height="1.600" fill="#fdc800"/>
 <rect x="83.500" y="59" width="22.500" height="1.300" fill="#dfe6f0"/>
 <rect x="125.900" y="26" width="1" height="27.500" fill="#fff" opacity=".8"/>
 <rect x="158.200" y="25" width="1" height="9.500" fill="#fff" opacity=".8"/><rect x="158.200" y="67" width="1" height="8.500" fill="#fff" opacity=".8"/>
 <rect x="188.300" y="25" width="1" height="9.500" fill="#fff" opacity=".8"/><rect x="188.300" y="67" width="1" height="8.500" fill="#fff" opacity=".8"/>
 <path d="M158.500 49.800a6.500 6.500 0 0 1 6.500 6.500c0 4.500-6.500 10.800-6.500 10.800s-6.500-6.300-6.500-10.800a6.500 6.500 0 0 1 6.500-6.500z" fill="#1b4a8f"/>
 <circle cx="158.500" cy="56" r="2.300" fill="#fdc800"/>
</svg>
<div id="collapse"><svg class="abs" style="left:2px;top:11.400px;width:14px;height:20px" viewBox="0 0 14 20"><path d="M10 3.5 4 10l6 6.5" fill="none" stroke="#1b4a8f" stroke-width="1.5" stroke-linecap="round" stroke-linejoin="round"/></svg></div>
<div class="divider"></div>

<div class="mi" style="top:135px"><svg viewBox="0 0 30 30" fill="none" stroke="#5a6478" stroke-width="2" stroke-linejoin="round" stroke-linecap="round"><path d="M2.700 5.800 10.500 3.400v20.200L2.700 26zM10.500 3.400l9 2.800v20.200l-9-2.800M19.500 6.200l7.800-2.500v20.200l-7.800 2.500"/></svg><span>Story Overview</span></div>
<div class="mi" style="top:188px"><svg viewBox="0 0 30 30" fill="none" stroke="#5a6478" stroke-width="1.8" stroke-linejoin="round" stroke-linecap="round"><path d="M15 24.800s-8.500-5.700-8.500-10.900a8.500 8.500 0 0 1 17 0c0 5.200-8.500 10.900-8.500 10.900z"/><circle cx="15" cy="12.600" r="3.200"/><path d="M7 26.700h16"/></svg><span>Add Story</span></div>
<div class="mi" style="top:242px"><svg viewBox="0 0 30 30" fill="none" stroke="#5a6478" stroke-width="1.800" stroke-linejoin="round" stroke-linecap="round"><path d="M7 7.600a2 2 0 0 1 2-2h9.500l5.500 5.500v11a2 2 0 0 1-2 2h-13a2 2 0 0 1-2-2z"/><path d="M18.500 5.600v5.500h5.500"/><path d="M15 21.500v-6M12.300 17.800l2.700-2.700 2.700 2.700" stroke-width="1.600"/></svg><span>Add/Upload Data</span></div>
<div class="mi" style="top:296px"><svg viewBox="0 0 30 30" fill="none" stroke="#5a6478" stroke-width="1.750" stroke-linejoin="round" stroke-linecap="round"><path d="M15.500 25.500h-9.500a3.500 3.500 0 0 1-3.500-3.500v-11a3.500 3.500 0 0 1 3.500-3.500h17a3.500 3.500 0 0 1 3.500 3.500v3"/><path d="M2.500 13.500h24"/><path d="M6.500 7.500v-1.500a3.500 3.500 0 0 1 3.500-3.500h7l5 5"/><path d="M17 2.500v2.500h3"/><circle cx="22" cy="21.500" r="3.200"/><path d="M22 15.800v2.500M22 24.700v2.500M17.100 18.700l2.100 1.200M24.800 23.100l2.100 1.200M17.100 24.300l2.100-1.200M24.800 19.900l2.100-1.200"/></svg><span>Process Data</span></div>
<div class="mi" style="top:350px"><svg viewBox="0 0 30 30" fill="none" stroke="#5a6478" stroke-width="1.750" stroke-linejoin="round" stroke-linecap="round"><path d="M15.500 3.900H8.500a3.600 3.600 0 0 0-3.600 3.600v13.900a3.600 3.600 0 0 0 3.600 3.600h14.300a3.600 3.600 0 0 0 3.600-3.600v-3.400"/><path d="M12.800 3.900v4.600c0 3.200-3 5.200-7.900 5.800M4.900 18.200c4-.6 7-2.100 8.800-4.800M10.300 16.800l6.200 8.200M14.300 21.800c2.600-2.900 6.500-4.300 12.100-3.800"/><path d="M22 15.800s-5-4.100-5-7.700a5 5 0 0 1 10 0c0 3.600-5 7.700-5 7.700z"/><circle cx="22" cy="8" r="1.100"/></svg><span>Base Map</span></div>
<div class="mi" style="top:403px"><svg viewBox="0 0 30 30" fill="none" stroke="#5a6478" stroke-width="1.750" stroke-linejoin="round" stroke-linecap="round"><path d="M12.500 23.700H8.300a3 3 0 0 1-3-3V8.700a3 3 0 0 1 3-3h14.300a3 3 0 0 1 3 3v6.500"/><path d="M9.800 10.700h.1M9.800 14.400h.1M9.800 18.100h.1" stroke-width="2.200"/><path d="M13.500 10.700h9M13.500 14.400h8M13.500 18.100h3.500"/><path d="M21.200 17.600l5 3.800-5 3.800v-2.200c-2.700 0-4.400.9-5.500 2.500.4-3.200 2.300-5.500 5.500-5.700z" fill="#5a6478" stroke-width=".8"/></svg><span>Preview &amp; Share</span></div>
<div class="mi active" style="top:457px;letter-spacing:-.4px"><svg viewBox="0 0 30 30" fill="none" stroke="#5a6478" stroke-width="1.750" stroke-linejoin="round" stroke-linecap="round"><path d="M9.300 13.400l-2.800 1.500a3 3 0 0 0-1.600 2.700v4.300a3.500 3.500 0 0 0 3.500 3.500h14.600a3.500 3.500 0 0 0 3.500-3.500v-4.300a3 3 0 0 0-1.600-2.700l-2.800-1.500"/><path d="M5.300 17.200l10.400 5.600 10.400-5.600M6 24.400l6.300-3.700M25.400 24.400l-6.300-3.700"/><path d="M15.700 17s-5-4.200-5-7.900a5 5 0 0 1 10 0c0 3.700-5 7.900-5 7.900z"/><circle cx="15.700" cy="9" r="1.500"/></svg><span>GIS Data</span></div>

<svg class="abs" style="left:28px;top:762px;width:26px;height:26px" viewBox="0 0 26 26"><path d="M4.300 18.500h13.900c-1.500-1.300-2-2.800-2-5.500v-2.300a4.950 4.950 0 0 0-9.900 0v2.300c0 2.700-.5 4.200-2 5.500z" fill="none" stroke="#1d2b2b" stroke-width="1.400" stroke-linejoin="round"/><path d="M9.500 19.500a1.800 1.800 0 0 0 3.500 0" fill="none" stroke="#1d2b2b" stroke-width="1.300"/><circle cx="19.300" cy="4.300" r="2" fill="#e0001b"/></svg>
<div id="notif">Notifications</div>
<div id="avatar">A</div>
<div id="user">Ashay</div>

<!--/SIDE-->
</div>

</div>
</body>
</html>
